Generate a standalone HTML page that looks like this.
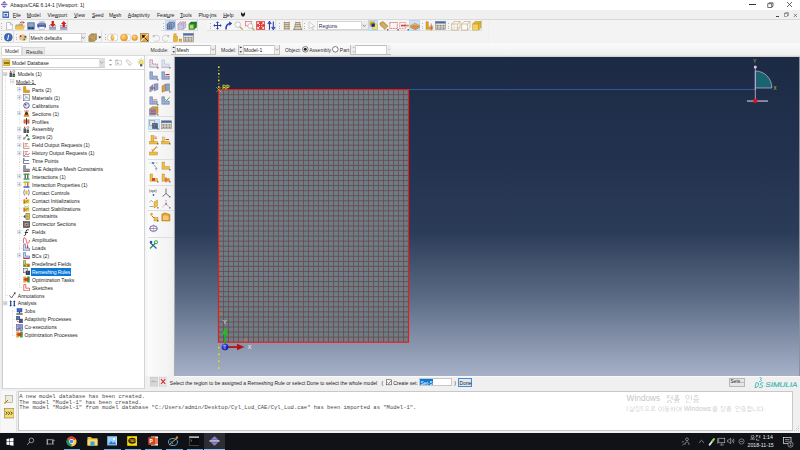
<!DOCTYPE html><html><head><meta charset="utf-8"><style>
html,body{margin:0;padding:0;}body{width:800px;height:450px;overflow:hidden;position:relative;background:#f0f0f0;font-family:"Liberation Sans",sans-serif;}
div,svg{box-sizing:border-box;}
</style></head><body>
<div style="position:absolute;left:0px;top:0px;width:800px;height:9.6px;background:#ffffff"></div>
<svg style="position:absolute;left:0px;top:0px;" width="9" height="9" viewBox="0 0 9 9"><path d="M4.2 1 L6.8 3.4 H1.6 Z" fill="#7a6ac0"/><rect x="1" y="4.1" width="6.4" height="0.9" fill="#6a5ab0"/><path d="M4.2 8.1 L6.8 5.7 H1.6 Z" fill="#7a6ac0"/></svg>
<div style="position:absolute;left:10.3px;top:1.6px;font-size:5.05px;line-height:6.06px;color:#222;white-space:nowrap;">Abaqus/CAE 6.14-1 [Viewport: 1]</div>
<div style="position:absolute;left:748.5px;top:4.2px;width:7px;height:0.7px;background:#333"></div>
<svg style="position:absolute;left:767px;top:1.5px;" width="7" height="6" viewBox="0 0 7 6"><rect x="0.8" y="1.8" width="4" height="3.6" fill="none" stroke="#333" stroke-width="0.7"/><path d="M2 1.8 V0.8 H6 V4.4 H4.8" fill="none" stroke="#333" stroke-width="0.7"/></svg>
<svg style="position:absolute;left:786px;top:1px;" width="7" height="7" viewBox="0 0 7 7"><path d="M1 1 L6 6 M6 1 L1 6" stroke="#333" stroke-width="0.75"/></svg>
<div style="position:absolute;left:0px;top:9.6px;width:800px;height:9.8px;background:#f0f0f0"></div>
<div style="position:absolute;left:0px;top:19.3px;width:800px;height:0.7px;background:#d9d9d9"></div>
<svg style="position:absolute;left:2px;top:10.5px;" width="8" height="8" viewBox="0 0 8 8"><rect x="0.5" y="0.5" width="6.5" height="6.5" fill="#3a6ab8"/><rect x="1.5" y="2" width="4.5" height="3.5" fill="#dfe8f5"/><rect x="2.5" y="3" width="2.5" height="1.5" fill="#3a5aa0"/></svg>
<div style="position:absolute;left:12.7px;top:11.6px;font-size:5.05px;line-height:6.06px;color:#222;white-space:nowrap;">File</div>
<div style="position:absolute;left:12.7px;top:17.0px;width:3.0844453125px;height:0.55px;background:#666"></div>
<div style="position:absolute;left:26.8px;top:11.6px;font-size:5.05px;line-height:6.06px;color:#222;white-space:nowrap;">Model</div>
<div style="position:absolute;left:26.8px;top:17.0px;width:4.2064921875px;height:0.55px;background:#666"></div>
<div style="position:absolute;left:47.6px;top:11.6px;font-size:5.05px;line-height:6.06px;color:#222;white-space:nowrap;">Viewport</div>
<div style="position:absolute;left:54.807296875px;top:17.0px;width:3.6470468749999996px;height:0.55px;background:#666"></div>
<div style="position:absolute;left:74px;top:11.6px;font-size:5.05px;line-height:6.06px;color:#222;white-space:nowrap;">View</div>
<div style="position:absolute;left:74.0px;top:17.0px;width:3.3685078125px;height:0.55px;background:#666"></div>
<div style="position:absolute;left:91.9px;top:11.6px;font-size:5.05px;line-height:6.06px;color:#222;white-space:nowrap;">Seed</div>
<div style="position:absolute;left:91.9px;top:17.0px;width:3.3685078125px;height:0.55px;background:#666"></div>
<div style="position:absolute;left:109px;top:11.6px;font-size:5.05px;line-height:6.06px;color:#222;white-space:nowrap;">Mesh</div>
<div style="position:absolute;left:113.2064921875px;top:17.0px;width:2.8082734375px;height:0.55px;background:#666"></div>
<div style="position:absolute;left:127.8px;top:11.6px;font-size:5.05px;line-height:6.06px;color:#222;white-space:nowrap;">Adaptivity</div>
<div style="position:absolute;left:127.8px;top:17.0px;width:3.3685078125px;height:0.55px;background:#666"></div>
<div style="position:absolute;left:157px;top:11.6px;font-size:5.05px;line-height:6.06px;color:#222;white-space:nowrap;">Feature</div>
<div style="position:absolute;left:167.1039453125px;top:17.0px;width:2.8082734375px;height:0.55px;background:#666"></div>
<div style="position:absolute;left:180px;top:11.6px;font-size:5.05px;line-height:6.06px;color:#222;white-space:nowrap;">Tools</div>
<div style="position:absolute;left:180.0px;top:17.0px;width:3.0844453125px;height:0.55px;background:#666"></div>
<div style="position:absolute;left:198.4px;top:11.6px;font-size:5.05px;line-height:6.06px;color:#222;white-space:nowrap;">Plug-ins</div>
<div style="position:absolute;left:210.18859375px;top:17.0px;width:1.122046875px;height:0.55px;background:#666"></div>
<div style="position:absolute;left:223.2px;top:11.6px;font-size:5.05px;line-height:6.06px;color:#222;white-space:nowrap;">Help</div>
<div style="position:absolute;left:223.2px;top:17.0px;width:3.6470468749999996px;height:0.55px;background:#666"></div>
<svg style="position:absolute;left:240px;top:11px;" width="6" height="7" viewBox="0 0 6 7"><path d="M1 1 L3 3 L5 1 L5 4 L3 6 L1 4 Z" fill="#222"/></svg>
<div style="position:absolute;left:776px;top:15.6px;width:3px;height:0.7px;background:#444"></div>
<svg style="position:absolute;left:784px;top:12.2px;" width="5" height="5" viewBox="0 0 5 5"><rect x="0.5" y="1.5" width="3" height="3" fill="none" stroke="#555" stroke-width="0.5"/><path d="M1.5 1.5 V0.5 H4.5 V3.5 H3.5" fill="none" stroke="#555" stroke-width="0.5"/></svg>
<svg style="position:absolute;left:792.5px;top:12.5px;" width="5" height="5" viewBox="0 0 5 5"><path d="M0.8 0.8 L4 4 M4 0.8 L0.8 4" stroke="#444" stroke-width="0.6"/></svg>
<div style="position:absolute;left:0px;top:20px;width:800px;height:23px;background:#f3f3f3"></div>
<div style="position:absolute;left:0px;top:19.8px;width:68.3px;height:11.399999999999999px;background:#f5f5f5;border-right:0.7px solid #dedede;border-bottom:0.7px solid #dedede"></div>
<div style="position:absolute;left:161px;top:19.8px;width:37px;height:11.399999999999999px;background:#f5f5f5;border-right:0.7px solid #dedede;border-bottom:0.7px solid #dedede"></div>
<div style="position:absolute;left:207px;top:19.8px;width:69px;height:11.399999999999999px;background:#f5f5f5;border-right:0.7px solid #dedede;border-bottom:0.7px solid #dedede"></div>
<div style="position:absolute;left:277px;top:19.8px;width:25.5px;height:11.399999999999999px;background:#f5f5f5;border-right:0.7px solid #dedede;border-bottom:0.7px solid #dedede"></div>
<div style="position:absolute;left:303px;top:19.8px;width:178.60000000000002px;height:11.399999999999999px;background:#f5f5f5;border-right:0.7px solid #dedede;border-bottom:0.7px solid #dedede"></div>
<div style="position:absolute;left:488px;top:19.8px;width:0.6px;height:23px;background:#efefef"></div>
<div style="position:absolute;left:0px;top:31.3px;width:14.3px;height:11.900000000000002px;background:#f5f5f5;border-right:0.7px solid #dedede;border-bottom:0.7px solid #dedede"></div>
<div style="position:absolute;left:15px;top:31.3px;width:87px;height:11.900000000000002px;background:#f5f5f5;border-right:0.7px solid #dedede;border-bottom:0.7px solid #dedede"></div>
<div style="position:absolute;left:103px;top:31.3px;width:91px;height:11.900000000000002px;background:#f5f5f5;border-right:0.7px solid #dedede;border-bottom:0.7px solid #dedede"></div>
<div style="position:absolute;left:1.2px;top:23.2px;width:0.8px;height:0.8px;background:#b4b4b4"></div>
<div style="position:absolute;left:1.2px;top:25.599999999999998px;width:0.8px;height:0.8px;background:#b4b4b4"></div>
<div style="position:absolute;left:1.2px;top:28.0px;width:0.8px;height:0.8px;background:#b4b4b4"></div>
<div style="position:absolute;left:162.6px;top:23.2px;width:0.8px;height:0.8px;background:#b4b4b4"></div>
<div style="position:absolute;left:162.6px;top:25.599999999999998px;width:0.8px;height:0.8px;background:#b4b4b4"></div>
<div style="position:absolute;left:162.6px;top:28.0px;width:0.8px;height:0.8px;background:#b4b4b4"></div>
<div style="position:absolute;left:209.5px;top:23.2px;width:0.8px;height:0.8px;background:#b4b4b4"></div>
<div style="position:absolute;left:209.5px;top:25.599999999999998px;width:0.8px;height:0.8px;background:#b4b4b4"></div>
<div style="position:absolute;left:209.5px;top:28.0px;width:0.8px;height:0.8px;background:#b4b4b4"></div>
<div style="position:absolute;left:279px;top:23.2px;width:0.8px;height:0.8px;background:#b4b4b4"></div>
<div style="position:absolute;left:279px;top:25.599999999999998px;width:0.8px;height:0.8px;background:#b4b4b4"></div>
<div style="position:absolute;left:279px;top:28.0px;width:0.8px;height:0.8px;background:#b4b4b4"></div>
<div style="position:absolute;left:304.2px;top:23.2px;width:0.8px;height:0.8px;background:#b4b4b4"></div>
<div style="position:absolute;left:304.2px;top:25.599999999999998px;width:0.8px;height:0.8px;background:#b4b4b4"></div>
<div style="position:absolute;left:304.2px;top:28.0px;width:0.8px;height:0.8px;background:#b4b4b4"></div>
<div style="position:absolute;left:1.2px;top:34.2px;width:0.8px;height:0.8px;background:#b4b4b4"></div>
<div style="position:absolute;left:1.2px;top:36.6px;width:0.8px;height:0.8px;background:#b4b4b4"></div>
<div style="position:absolute;left:1.2px;top:39.0px;width:0.8px;height:0.8px;background:#b4b4b4"></div>
<div style="position:absolute;left:16.2px;top:34.2px;width:0.8px;height:0.8px;background:#b4b4b4"></div>
<div style="position:absolute;left:16.2px;top:36.6px;width:0.8px;height:0.8px;background:#b4b4b4"></div>
<div style="position:absolute;left:16.2px;top:39.0px;width:0.8px;height:0.8px;background:#b4b4b4"></div>
<div style="position:absolute;left:104.5px;top:34.2px;width:0.8px;height:0.8px;background:#b4b4b4"></div>
<div style="position:absolute;left:104.5px;top:36.6px;width:0.8px;height:0.8px;background:#b4b4b4"></div>
<div style="position:absolute;left:104.5px;top:39.0px;width:0.8px;height:0.8px;background:#b4b4b4"></div>
<div style="position:absolute;left:422.2px;top:23.2px;width:0.8px;height:0.8px;background:#b4b4b4"></div>
<div style="position:absolute;left:422.2px;top:25.599999999999998px;width:0.8px;height:0.8px;background:#b4b4b4"></div>
<div style="position:absolute;left:422.2px;top:28.0px;width:0.8px;height:0.8px;background:#b4b4b4"></div>
<div style="position:absolute;left:448.2px;top:23.2px;width:0.8px;height:0.8px;background:#b4b4b4"></div>
<div style="position:absolute;left:448.2px;top:25.599999999999998px;width:0.8px;height:0.8px;background:#b4b4b4"></div>
<div style="position:absolute;left:448.2px;top:28.0px;width:0.8px;height:0.8px;background:#b4b4b4"></div>
<svg style="position:absolute;left:5.5px;top:21.5px;" width="7.5" height="8.5" viewBox="0 0 7.5 8.5"><path d="M0.5 0.5 H4.5 L6.8 2.8 V7.8 H0.5 Z" fill="#fbfbfd" stroke="#9a9aa8" stroke-width="0.6"/><path d="M4.5 0.5 V2.8 H6.8" fill="#e0e0e8" stroke="#9a9aa8" stroke-width="0.5"/></svg>
<svg style="position:absolute;left:14.8px;top:21px;" width="10.5" height="9" viewBox="0 0 10.5 9"><path d="M0.8 3.5 H3.5 L4.3 2.6 H8 V8 H0.8 Z" fill="#a8a8a8"/><path d="M0.3 4.8 H9.5 L8.3 8.3 H0.6 Z" fill="#f2c542" stroke="#c89a20" stroke-width="0.4"/><path d="M5 1.5 Q7 0.3 8.8 1.6" stroke="#e02020" stroke-width="0.9" fill="none"/><path d="M9.8 1.2 L8 0.5 L8.5 2.8 Z" fill="#e02020"/></svg>
<svg style="position:absolute;left:26.5px;top:21.8px;" width="8" height="8" viewBox="0 0 8 8"><rect x="0.4" y="0.4" width="7.2" height="7.2" fill="#3a64a8"/><rect x="1.3" y="1.2" width="5.4" height="3.6" fill="#9aa4b4"/><rect x="1.6" y="5.6" width="1.6" height="1.2" fill="#1c2c50"/><rect x="4.6" y="5.6" width="1.6" height="1.2" fill="#1c2c50"/></svg>
<svg style="position:absolute;left:36.5px;top:21.3px;" width="9.8" height="8.6" viewBox="0 0 9.8 8.6"><rect x="2.2" y="0.3" width="5.4" height="2.6" fill="#b8b8c0"/><rect x="0.3" y="2.6" width="9.2" height="3.8" rx="1" fill="#3a4ea8"/><rect x="1.2" y="3.3" width="7.4" height="0.9" fill="#8a9ad8"/><rect x="2" y="5.8" width="5.8" height="2.6" fill="#f4f4f8" stroke="#8a8aa0" stroke-width="0.4"/><circle cx="8.2" cy="4.6" r="0.45" fill="#30c030"/></svg>
<svg style="position:absolute;left:48.5px;top:21px;" width="7.5" height="9" viewBox="0 0 7.5 9"><rect x="0.5" y="4.3" width="6.5" height="4.4" fill="#d4dcea" stroke="#6a7aa0" stroke-width="0.4"/><rect x="0.8" y="6" width="6" height="0.7" fill="#6a7aa0"/><rect x="0.8" y="7.5" width="6" height="0.6" fill="#6a7aa0"/><path d="M2.6 0 H4.9 V3.1 H6.5 L3.75 5.9 L1 3.1 H2.6 Z" fill="#e01818"/></svg>
<svg style="position:absolute;left:59.5px;top:21px;" width="7.5" height="9" viewBox="0 0 7.5 9"><rect x="0.5" y="4.3" width="6.5" height="4.4" fill="#d4dcea" stroke="#6a7aa0" stroke-width="0.4"/><rect x="0.8" y="6" width="6" height="0.7" fill="#6a7aa0"/><rect x="0.8" y="7.5" width="6" height="0.6" fill="#6a7aa0"/><path d="M2.6 6 H4.9 V2.9 H6.5 L3.75 0.1 L1 2.9 H2.6 Z" fill="#e01818"/></svg>
<div style="position:absolute;left:165px;top:20.3px;width:11px;height:10.6px;background:#cce4f7;border:0.5px solid #b8daf4"></div>
<svg style="position:absolute;left:166px;top:21px;" width="10" height="9" viewBox="0 0 10 9"><path d="M0.8 3 L3.3 0.8 H8.8 V6.3 L6.3 8.5 H0.8 Z" fill="#4a5a88"/><path d="M0.8 3 H6.3 V8.5 M6.3 3 L8.8 0.8" stroke="#dfe6f4" stroke-width="0.4" fill="none"/><path d="M2.6 3 V8.5 M4.45 3 V8.5 M0.8 4.85 H6.3 M0.8 6.7 H6.3 M1.6 2.3 H7.1 M2.45 1.55 H7.95 M7.1 2.3 V7.8 M7.95 1.55 V7.05 M6.3 4.85 L8.8 2.65 M6.3 6.7 L8.8 4.5" stroke="#c8d2ec" stroke-width="0.35" fill="none"/></svg>
<svg style="position:absolute;left:177px;top:21px;" width="10" height="9" viewBox="0 0 10 9"><path d="M0.8 3 L3.3 0.8 H8.8 V6.3 L6.3 8.5 H0.8 Z" fill="#b8c8ee"/><path d="M0.8 3 L3.3 0.8 H8.8 V6.3 L6.3 8.5 H0.8 Z M0.8 3 H6.3 V8.5 M6.3 3 L8.8 0.8" fill="none" stroke="#e83030" stroke-width="0.6" stroke-dasharray="0.7 0.9"/></svg>
<svg style="position:absolute;left:188px;top:21px;" width="10" height="9" viewBox="0 0 10 9"><path d="M0.8 3 L3.3 0.8 H8.8 V6.3 L6.3 8.5 H0.8 Z" fill="#207a20"/><path d="M0.8 3 H6.3 V8.5 H0.8 Z" fill="#40a840"/><rect x="2" y="4.2" width="3.2" height="3.2" fill="#d8d070"/><path d="M6.3 3 L8.8 0.8 M0.8 3 L3.3 0.8" stroke="#185818" stroke-width="0.4"/></svg>
<svg style="position:absolute;left:212.8px;top:21px;" width="9" height="9" viewBox="0 0 9 9"><path d="M4.5 0.3 L6 2 H5 V4 H7 V3 L8.7 4.5 L7 6 V5 H5 V7 H6 L4.5 8.7 L3 7 H4 V5 H2 V6 L0.3 4.5 L2 3 V4 H4 V2 H3 Z" fill="#2a3ea8"/></svg>
<svg style="position:absolute;left:223.5px;top:21px;" width="8.5" height="9" viewBox="0 0 8.5 9"><path d="M2 8.5 Q1.8 3 6 2.4" stroke="#2a3ea8" stroke-width="1.5" fill="none"/><path d="M5.2 0.2 L8.3 2.5 L5.2 4.8 Z" fill="#2a3ea8"/></svg>
<svg style="position:absolute;left:233.5px;top:21px;" width="9.5" height="9" viewBox="0 0 9.5 9"><circle cx="3.8" cy="3.6" r="2.8" fill="#f8f8fa" stroke="#a8a8b0" stroke-width="0.6"/><path d="M5.8 5.7 L8.8 8.6" stroke="#c8a050" stroke-width="1.3"/></svg>
<svg style="position:absolute;left:244.5px;top:21px;" width="10" height="9.5" viewBox="0 0 10 9.5"><rect x="0.4" y="0.4" width="6" height="4.5" fill="none" stroke="#e05050" stroke-width="0.6"/><circle cx="5.3" cy="5" r="2.5" fill="#f8f8fa" stroke="#a8a8b0" stroke-width="0.6"/><path d="M7 6.8 L9.5 9.2" stroke="#c8a050" stroke-width="1.2"/></svg>
<svg style="position:absolute;left:255.8px;top:21px;" width="9.5" height="9" viewBox="0 0 9.5 9"><rect x="0.2" y="0.2" width="9" height="8.6" fill="#e23a3a"/><path d="M2.2 2.2 L3.9 3.9 M7.2 2.2 L5.5 3.9 M2.2 6.8 L3.9 5.1 M7.2 6.8 L5.5 5.1" stroke="#fff" stroke-width="1"/><path d="M1.2 1.2 H3.6 L1.2 3.6 Z M8.2 1.2 H5.8 L8.2 3.6 Z M1.2 7.8 H3.6 L1.2 5.4 Z M8.2 7.8 H5.8 L8.2 5.4 Z" fill="#fff"/></svg>
<svg style="position:absolute;left:266.8px;top:21px;" width="9" height="9" viewBox="0 0 9 9"><path d="M2.5 8.8 V2 M0.8 3 L2.5 0.5 L4.2 3" stroke="#2a3ea8" stroke-width="1.1" fill="none"/><path d="M6.3 0.5 V7 M4.6 6 L6.3 8.5 L8 6" stroke="#2a3ea8" stroke-width="1.1" fill="none"/></svg>
<svg style="position:absolute;left:282.5px;top:21px;" width="8" height="9" viewBox="0 0 8 9"><path d="M1.3 0.5 V8.8 M6.3 0.5 V8.8" stroke="#c8b080" stroke-width="1.1"/><path d="M1.3 1.8 H6.3 M1.3 3.8 H6.3 M1.3 5.8 H6.3 M1.3 7.8 H6.3" stroke="#6a5030" stroke-width="0.8"/></svg>
<svg style="position:absolute;left:292.5px;top:21px;" width="9.5" height="9" viewBox="0 0 9.5 9"><path d="M3 0.5 L1 8.8 M6.5 0.5 L8.5 8.8" stroke="#c8b080" stroke-width="1.1"/><path d="M2.7 1.8 H6.8 M2.2 3.8 H7.3 M1.7 5.8 H7.8 M0.3 8.2 H9.2" stroke="#6a5030" stroke-width="0.8"/></svg>
<svg style="position:absolute;left:307.8px;top:21px;" width="8" height="9" viewBox="0 0 8 9"><path d="M1 0.6 L6.8 5.6 L4 5.8 L5.6 8.6 L4.6 9 L3 6.2 L1 8 Z" fill="#fafafa" stroke="#a8a8a8" stroke-width="0.5"/></svg>
<div style="position:absolute;left:317.3px;top:20.5px;width:50.8px;height:9.4px;background:#fff;border:0.6px solid #d4d4d4"></div>
<div style="position:absolute;left:360.8px;top:20.9px;width:6.9px;height:8.6px;background:#ececec;border-left:0.5px solid #d8d8d8"></div>
<svg style="position:absolute;left:362.1px;top:23.6px;" width="5" height="4" viewBox="0 0 5 4"><path d="M0.8 0.8 L2.3 2.5 L3.8 0.8" stroke="#555" stroke-width="0.6" fill="none"/></svg>
<div style="position:absolute;left:318.8px;top:22.5px;font-size:5.05px;line-height:6.06px;color:#2a2a58;white-space:nowrap;">Regions</div>
<div style="position:absolute;left:367.6px;top:20.3px;width:10.6px;height:10.6px;background:#cce4f7;border:0.5px solid #b8daf4"></div>
<svg style="position:absolute;left:368.5px;top:21.3px;" width="9" height="9" viewBox="0 0 9 9"><rect x="0.5" y="0.5" width="5.5" height="5" fill="#e0a820"/><rect x="3.5" y="3" width="5" height="5.3" fill="#f0e070" stroke="#b09020" stroke-width="0.3"/><rect x="2.5" y="2.5" width="3.3" height="3.3" fill="#1a2a8a"/></svg>
<svg style="position:absolute;left:378.5px;top:21px;" width="10" height="9.5" viewBox="0 0 10 9.5"><path d="M1 2 L4 0.5 L9 5 L6 8.5 L1 4 Z" fill="#c8a050" stroke="#806030" stroke-width="0.4"/><path d="M2 3 L7 7.5 M3 2 L8 6.3" stroke="#f0d090" stroke-width="0.5"/><rect x="8.2" y="8.2" width="1.2" height="1.2" fill="#222"/></svg>
<svg style="position:absolute;left:388.8px;top:21px;" width="10" height="9.5" viewBox="0 0 10 9.5"><rect x="0.8" y="1.5" width="7.5" height="6" fill="none" stroke="#e04040" stroke-width="0.7" stroke-dasharray="1.2 0.5"/><rect x="8.5" y="8.2" width="1.2" height="1.2" fill="#222"/></svg>
<svg style="position:absolute;left:399px;top:21px;" width="10.5" height="9.5" viewBox="0 0 10.5 9.5"><rect x="0.7" y="1.5" width="6" height="6.2" fill="none" stroke="#e04040" stroke-width="0.6" stroke-dasharray="1 0.5"/><path d="M2 4.6 H8 M3 3.4 V5.8 M5.2 3.4 V5.8" stroke="#d02020" stroke-width="0.8"/><circle cx="8.8" cy="4.6" r="1.2" fill="#e0a030"/><rect x="8.6" y="8.2" width="1.2" height="1.2" fill="#222"/></svg>
<div style="position:absolute;left:408.8px;top:20.3px;width:11.6px;height:10.6px;background:#cce4f7;border:0.5px solid #b8daf4"></div>
<svg style="position:absolute;left:409.5px;top:21.5px;" width="10" height="8.5" viewBox="0 0 10 8.5"><path d="M0.5 3.5 L5 1 L9.5 3.5 L5 6 Z" fill="#f0b060" stroke="#b07030" stroke-width="0.35"/><path d="M0.5 3.5 V5.5 L5 8 L9.5 5.5 V3.5" fill="#e09040" stroke="#b07030" stroke-width="0.35"/><path d="M2.5 4.5 Q5 3 7.5 4.5" stroke="#6a8ad0" stroke-width="0.6" fill="none"/></svg>
<svg style="position:absolute;left:425px;top:21px;" width="9.5" height="9.5" viewBox="0 0 9.5 9.5"><path d="M1 0.8 H3.3 V6 H7.8 V8.3 H1 Z" fill="#e0a828" stroke="#a07010" stroke-width="0.4"/><path d="M6.3 2.5 V9.5" stroke="#e03030" stroke-width="0.6"/><path d="M4.5 5 H8.5" stroke="#555" stroke-width="0.4"/></svg>
<svg style="position:absolute;left:435.2px;top:21.2px;" width="11" height="9" viewBox="0 0 11 9"><rect x="0.5" y="0.5" width="10" height="8" fill="#e8e4d8" stroke="#707070" stroke-width="0.5"/><rect x="0.5" y="0.5" width="10" height="2" fill="#4a6ab0"/><rect x="1.5" y="4" width="2" height="1.5" fill="#8a8070"/><rect x="4.5" y="4" width="2" height="1.5" fill="#8a8070"/><rect x="7.5" y="4" width="2" height="1.5" fill="#8a8070"/><rect x="1.5" y="6.3" width="2" height="1.5" fill="#8a8070"/><rect x="4.5" y="6.3" width="2" height="1.5" fill="#8a8070"/><rect x="7.5" y="6.3" width="2" height="1.5" fill="#8a8070"/></svg>
<svg style="position:absolute;left:450.8px;top:21.2px;" width="10" height="9.5" viewBox="0 0 10 9.5"><path d="M0.6 3 L3 0.6 H9 V6.6 L6.6 9 H0.6 Z" fill="#fafafa" stroke="#b09050" stroke-width="0.5"/><path d="M0.6 3 H6.6 V9 M6.6 3 L9 0.6" stroke="#b09050" stroke-width="0.5" fill="none"/><path d="M3 0.6 V6.6 H9 M0.6 9 L3 6.6" stroke="#c8b080" stroke-width="0.4" fill="none"/></svg>
<svg style="position:absolute;left:461.2px;top:21.2px;" width="10" height="9.5" viewBox="0 0 10 9.5"><path d="M0.6 3 L3 0.6 H9 V6.6 L6.6 9 H0.6 Z" fill="#fafafa" stroke="#b09050" stroke-width="0.5"/><path d="M0.6 3 H6.6 V9 M6.6 3 L9 0.6" stroke="#b09050" stroke-width="0.5" fill="none"/></svg>
<svg style="position:absolute;left:471.6px;top:21.2px;" width="10" height="9.5" viewBox="0 0 10 9.5"><path d="M0.6 3 L3 0.6 H9 V6.6 L6.6 9 H0.6 Z" fill="#e8b830" stroke="#a08020" stroke-width="0.5"/><path d="M0.6 3 H6.6 V9 H0.6 Z" fill="#f4d060"/><path d="M0.6 3 H6.6 V9 M6.6 3 L9 0.6" stroke="#a08020" stroke-width="0.5" fill="none"/></svg>
<svg style="position:absolute;left:4.3px;top:33.2px;" width="8.6" height="8.6" viewBox="0 0 8.6 8.6"><circle cx="4.3" cy="4.3" r="4" fill="#3a6ab8" stroke="#2a4a90" stroke-width="0.4"/><path d="M4.8 1.8 L3.6 7" stroke="#fff" stroke-width="1"/></svg>
<svg style="position:absolute;left:18.3px;top:34px;" width="9.5" height="7.5" viewBox="0 0 9.5 7.5"><path d="M1 3.5 Q1 0.3 5 0.5 Q9 0.8 9 3.5 Q9 6.8 5 7 Q3.5 7 3.5 5.5 Q2 7 1 5 Z" fill="#e8c090"/><circle cx="2.6" cy="2.2" r="0.9" fill="#e02020"/><circle cx="5" cy="1.6" r="0.9" fill="#e8d020"/><circle cx="7.3" cy="2.8" r="0.9" fill="#203080"/><circle cx="6.3" cy="5.3" r="0.9" fill="#20a020"/></svg>
<div style="position:absolute;left:29px;top:33.2px;width:57.2px;height:8.8px;background:#fff;border:0.6px solid #cfcfcf"></div>
<div style="position:absolute;left:80.5px;top:33.6px;width:5.4px;height:8px;background:#ececec;border-left:0.5px solid #d0d0d0"></div>
<svg style="position:absolute;left:81px;top:36px;" width="5" height="4" viewBox="0 0 5 4"><path d="M0.8 0.8 L2.3 2.5 L3.8 0.8" stroke="#666" stroke-width="0.6" fill="none"/></svg>
<div style="position:absolute;left:30.6px;top:35.3px;font-size:5.05px;line-height:6.06px;color:#222;white-space:nowrap;">Mesh defaults</div>
<svg style="position:absolute;left:87.5px;top:32.8px;" width="9" height="9" viewBox="0 0 9 9"><path d="M0.8 3 L3 0.8 H8.5 V6.3 L6.3 8.5 H0.8 Z" fill="#b09050" stroke="#806020" stroke-width="0.4"/><path d="M0.8 3 H6.3 V8.5 M6.3 3 L8.5 0.8 M2 4.5 H5 V7.5" stroke="#e0c890" stroke-width="0.4" fill="none"/></svg>
<svg style="position:absolute;left:98px;top:36px;" width="4" height="3" viewBox="0 0 4 3"><path d="M0.3 0.5 H3.2 L1.75 2.5 Z" fill="#222"/></svg>
<svg style="position:absolute;left:106.5px;top:33px;" width="11.5" height="9" viewBox="0 0 11.5 9"><defs><radialGradient id="og" cx="0.4" cy="0.35" r="0.7"><stop offset="0" stop-color="#ffd890"/><stop offset="1" stop-color="#e89018"/></radialGradient><clipPath id="c1"><circle cx="4" cy="4.5" r="3.6"/></clipPath></defs><circle cx="4" cy="4.5" r="3.6" fill="#fff" stroke="#a0a0a0" stroke-width="0.4"/><circle cx="7.3" cy="4.5" r="3.6" fill="#fff" stroke="#a0a0a0" stroke-width="0.4"/><circle cx="7.3" cy="4.5" r="3.6" fill="url(#og)" clip-path="url(#c1)"/></svg>
<svg style="position:absolute;left:119.5px;top:33px;" width="11.5" height="9" viewBox="0 0 11.5 9"><circle cx="7.3" cy="4.5" r="3.6" fill="#fff" stroke="#a0a0a0" stroke-width="0.4"/><circle cx="4" cy="4.5" r="3.6" fill="url(#og)" stroke="#c88020" stroke-width="0.3"/></svg>
<svg style="position:absolute;left:131.3px;top:33.8px;" width="7.5" height="7.5" viewBox="0 0 7.5 7.5"><circle cx="3.7" cy="3.7" r="2.9" fill="url(#og)" stroke="#c88020" stroke-width="0.3"/></svg>
<svg style="position:absolute;left:140px;top:33px;" width="9" height="9" viewBox="0 0 9 9"><rect x="0.3" y="0.3" width="8.4" height="8.4" fill="#f0a830" stroke="#666" stroke-width="0.4"/><path d="M8.3 0.7 L0.7 8.3" stroke="#fff" stroke-width="0.9"/><path d="M8.3 8.3 L4.5 4.5" stroke="#111" stroke-width="0.8"/><path d="M2 2 L5.6 2.6 L2.6 5.6 Z" fill="#111"/></svg>
<svg style="position:absolute;left:151.5px;top:33.5px;" width="8" height="8" viewBox="0 0 8 8"><path d="M2 2.5 A3.2 3.2 0 1 1 2.2 6.5" stroke="#b8b8b8" stroke-width="0.6" fill="none"/><path d="M0.5 1 L3.3 1.6 L1.3 3.8 Z" fill="#b8b8b8"/></svg>
<svg style="position:absolute;left:162.3px;top:33.5px;" width="8" height="8" viewBox="0 0 8 8"><path d="M6 2.5 A3.2 3.2 0 1 0 5.8 6.5" stroke="#b8b8b8" stroke-width="0.6" fill="none"/><path d="M7.5 1 L4.7 1.6 L6.7 3.8 Z" fill="#b8b8b8"/></svg>
<svg style="position:absolute;left:172.8px;top:33px;" width="9.5" height="9.5" viewBox="0 0 9.5 9.5"><rect x="0.5" y="0.5" width="3" height="2" fill="#e0a020"/><rect x="0.5" y="3" width="4" height="5.5" fill="#f0b030" stroke="#a07010" stroke-width="0.3"/><rect x="6" y="6" width="3" height="2.5" fill="#f0b030" stroke="#a07010" stroke-width="0.3"/></svg>
<svg style="position:absolute;left:183px;top:33px;" width="11" height="9" viewBox="0 0 11 9"><rect x="0.5" y="0.5" width="10" height="8" fill="#e8e4d8" stroke="#707070" stroke-width="0.5"/><rect x="0.5" y="0.5" width="10" height="2" fill="#4a6ab0"/><rect x="1.5" y="4" width="2" height="1.5" fill="#8a8070"/><rect x="4.5" y="4" width="2" height="1.5" fill="#8a8070"/><rect x="7.5" y="4" width="2" height="1.5" fill="#8a8070"/><rect x="1.5" y="6.3" width="2" height="1.5" fill="#8a8070"/><rect x="4.5" y="6.3" width="2" height="1.5" fill="#8a8070"/><rect x="7.5" y="6.3" width="2" height="1.5" fill="#8a8070"/></svg>
<div style="position:absolute;left:0px;top:43px;width:800px;height:14px;background:linear-gradient(#fbfbfb,#f0f0f0 85%,#c8c8c8)"></div>
<div style="position:absolute;left:150.5px;top:46.9px;font-size:5.05px;line-height:6.06px;color:#333;white-space:nowrap;">Module:</div>
<div style="position:absolute;left:170.5px;top:44.8px;width:45.0px;height:9.900000000000006px;background:#fff;border:0.6px solid #bdbdbd"></div>
<div style="position:absolute;left:171.0px;top:45.3px;width:5px;height:8.900000000000006px;background:#ededed;border-right:0.5px solid #d0d0d0"></div>
<svg style="position:absolute;left:171.8px;top:46.099999999999994px;" width="3.5" height="7.300000000000006" viewBox="0 0 3.5 7.300000000000006"><path d="M0.4 2 L1.75 0.5 L3.1 2 Z M0.4 5.3 L1.75 6.8 L3.1 5.3 Z" fill="#333"/></svg>
<div style="position:absolute;left:210.3px;top:45.3px;width:4.7px;height:8.900000000000006px;background:#ededed;border-left:0.5px solid #d0d0d0"></div>
<svg style="position:absolute;left:210.7px;top:48.199999999999996px;" width="4" height="3" viewBox="0 0 4 3"><path d="M0.6 0.6 L2 2.2 L3.4 0.6" stroke="#666" stroke-width="0.55" fill="none"/></svg>
<div style="position:absolute;left:176.5px;top:47.099999999999994px;font-size:5.05px;line-height:6.06px;color:#222;white-space:nowrap;">Mesh</div>
<div style="position:absolute;left:221px;top:46.9px;font-size:5.05px;line-height:6.06px;color:#333;white-space:nowrap;">Model:</div>
<div style="position:absolute;left:238px;top:44.8px;width:41.5px;height:9.900000000000006px;background:#fff;border:0.6px solid #bdbdbd"></div>
<div style="position:absolute;left:238.5px;top:45.3px;width:5px;height:8.900000000000006px;background:#ededed;border-right:0.5px solid #d0d0d0"></div>
<svg style="position:absolute;left:239.3px;top:46.099999999999994px;" width="3.5" height="7.300000000000006" viewBox="0 0 3.5 7.300000000000006"><path d="M0.4 2 L1.75 0.5 L3.1 2 Z M0.4 5.3 L1.75 6.8 L3.1 5.3 Z" fill="#333"/></svg>
<div style="position:absolute;left:274.3px;top:45.3px;width:4.7px;height:8.900000000000006px;background:#ededed;border-left:0.5px solid #d0d0d0"></div>
<svg style="position:absolute;left:274.7px;top:48.199999999999996px;" width="4" height="3" viewBox="0 0 4 3"><path d="M0.6 0.6 L2 2.2 L3.4 0.6" stroke="#666" stroke-width="0.55" fill="none"/></svg>
<div style="position:absolute;left:244px;top:47.099999999999994px;font-size:5.05px;line-height:6.06px;color:#222;white-space:nowrap;">Model-1</div>
<div style="position:absolute;left:285px;top:46.9px;font-size:5.05px;line-height:6.06px;color:#333;white-space:nowrap;">Object:</div>
<svg style="position:absolute;left:301.6px;top:46.3px;" width="7" height="7" viewBox="0 0 7 7"><circle cx="3.3" cy="3.3" r="2.8" fill="#fff" stroke="#333" stroke-width="0.6"/><circle cx="3.3" cy="3.3" r="1.5" fill="#222"/></svg>
<div style="position:absolute;left:309.2px;top:46.9px;font-size:5.05px;line-height:6.06px;color:#333;white-space:nowrap;">Assembly</div>
<svg style="position:absolute;left:331.5px;top:46.3px;" width="7" height="7" viewBox="0 0 7 7"><circle cx="3.3" cy="3.3" r="2.8" fill="#fff" stroke="#333" stroke-width="0.6"/></svg>
<div style="position:absolute;left:339.8px;top:46.9px;font-size:5.05px;line-height:6.06px;color:#333;white-space:nowrap;">Part:</div>
<div style="position:absolute;left:350.3px;top:44.8px;width:41.19999999999999px;height:9.900000000000006px;background:#fff;border:0.6px solid #bdbdbd"></div>
<div style="position:absolute;left:350.8px;top:45.3px;width:5px;height:8.900000000000006px;background:#ededed;border-right:0.5px solid #d0d0d0"></div>
<svg style="position:absolute;left:351.6px;top:46.099999999999994px;" width="3.5" height="7.300000000000006" viewBox="0 0 3.5 7.300000000000006"><path d="M0.4 2 L1.75 0.5 L3.1 2 Z M0.4 5.3 L1.75 6.8 L3.1 5.3 Z" fill="#bbb"/></svg>
<div style="position:absolute;left:386.3px;top:45.3px;width:4.7px;height:8.900000000000006px;background:#ededed;border-left:0.5px solid #d0d0d0"></div>
<svg style="position:absolute;left:386.7px;top:48.199999999999996px;" width="4" height="3" viewBox="0 0 4 3"><path d="M0.6 0.6 L2 2.2 L3.4 0.6" stroke="#bbb" stroke-width="0.55" fill="none"/></svg>
<div style="position:absolute;left:174px;top:57px;width:1px;height:318.8px;background:#a8acb2"></div>
<div style="position:absolute;left:175px;top:57px;width:625px;height:318.8px;background:linear-gradient(to bottom,#1c2a44 0%,#233350 35%,#2b3c58 55%,#5a6a84 75%,#a6b1c8 100%);border-right:1px solid #8a92a0"></div>
<svg style="position:absolute;left:217px;top:88px;" width="194.0" height="256.5" viewBox="0 0 194.0 256.5"><g transform="translate(1.500,1.650)"><rect x="0" y="0" width="190.000" height="252.500" fill="#6c7e85"/><path d="M0 5.050 H190.000 M0 10.100 H190.000 M0 15.150 H190.000 M0 20.200 H190.000 M0 25.250 H190.000 M0 30.300 H190.000 M0 35.350 H190.000 M0 40.400 H190.000 M0 45.450 H190.000 M0 50.500 H190.000 M0 55.550 H190.000 M0 60.600 H190.000 M0 65.650 H190.000 M0 70.700 H190.000 M0 75.750 H190.000 M0 80.800 H190.000 M0 85.850 H190.000 M0 90.900 H190.000 M0 95.950 H190.000 M0 101.000 H190.000 M0 106.050 H190.000 M0 111.100 H190.000 M0 116.150 H190.000 M0 121.200 H190.000 M0 126.250 H190.000 M0 131.300 H190.000 M0 136.350 H190.000 M0 141.400 H190.000 M0 146.450 H190.000 M0 151.500 H190.000 M0 156.550 H190.000 M0 161.600 H190.000 M0 166.650 H190.000 M0 171.700 H190.000 M0 176.750 H190.000 M0 181.800 H190.000 M0 186.850 H190.000 M0 191.900 H190.000 M0 196.950 H190.000 M0 202.000 H190.000 M0 207.050 H190.000 M0 212.100 H190.000 M0 217.150 H190.000 M0 222.200 H190.000 M0 227.250 H190.000 M0 232.300 H190.000 M0 237.350 H190.000 M0 242.400 H190.000 M0 247.450 H190.000" stroke="#6a5058" stroke-width="1.0" fill="none"/><path d="M5.000 0 V252.500 M10.000 0 V252.500 M15.000 0 V252.500 M20.000 0 V252.500 M25.000 0 V252.500 M30.000 0 V252.500 M35.000 0 V252.500 M40.000 0 V252.500 M45.000 0 V252.500 M50.000 0 V252.500 M55.000 0 V252.500 M60.000 0 V252.500 M65.000 0 V252.500 M70.000 0 V252.500 M75.000 0 V252.500 M80.000 0 V252.500 M85.000 0 V252.500 M90.000 0 V252.500 M95.000 0 V252.500 M100.000 0 V252.500 M105.000 0 V252.500 M110.000 0 V252.500 M115.000 0 V252.500 M120.000 0 V252.500 M125.000 0 V252.500 M130.000 0 V252.500 M135.000 0 V252.500 M140.000 0 V252.500 M145.000 0 V252.500 M150.000 0 V252.500 M155.000 0 V252.500 M160.000 0 V252.500 M165.000 0 V252.500 M170.000 0 V252.500 M175.000 0 V252.500 M180.000 0 V252.500 M185.000 0 V252.500" stroke="#74444c" stroke-width="0.8" fill="none"/><rect x="0" y="0" width="190.000" height="252.500" fill="none" stroke="#e41c1c" stroke-width="1.2"/></g></svg>
<div style="position:absolute;left:408.5px;top:89.4px;width:347px;height:1px;background:#2a5a98"></div>
<svg style="position:absolute;left:217px;top:55px;" width="4" height="35" viewBox="0 0 4 35"><rect x="1.00" y="11.40" width="1.6" height="1.6" fill="#e0e020"/><rect x="1.25" y="14.85" width="1.1" height="1.1" fill="#b8b838"/><rect x="1.00" y="18.00" width="1.6" height="1.6" fill="#e0e020"/><rect x="1.25" y="21.45" width="1.1" height="1.1" fill="#b8b838"/><rect x="1.00" y="24.60" width="1.6" height="1.6" fill="#e0e020"/><rect x="1.25" y="28.25" width="1.1" height="1.1" fill="#b8b838"/><rect x="1.00" y="31.20" width="1.6" height="1.6" fill="#e0e020"/></svg>
<svg style="position:absolute;left:217px;top:340px;" width="4" height="32" viewBox="0 0 4 32"><rect x="1.25" y="3.65" width="1.1" height="1.1" fill="#b8b838"/><rect x="1.00" y="6.80" width="1.6" height="1.6" fill="#e0e020"/><rect x="1.25" y="10.45" width="1.1" height="1.1" fill="#b8b838"/><rect x="1.00" y="13.60" width="1.6" height="1.6" fill="#e0e020"/><rect x="1.25" y="17.25" width="1.1" height="1.1" fill="#b8b838"/><rect x="1.00" y="20.40" width="1.6" height="1.6" fill="#e0e020"/><rect x="1.25" y="24.05" width="1.1" height="1.1" fill="#b8b838"/><rect x="1.00" y="27.20" width="1.6" height="1.6" fill="#e0e020"/></svg>
<svg style="position:absolute;left:214px;top:83px;" width="18" height="11" viewBox="0 0 18 11"><path d="M2.2 4.2 L7.2 9.2 M2.2 9.2 L7.2 4.2" stroke="#c8c830" stroke-width="0.6"/><text x="8.2" y="6.2" font-family="Liberation Sans" font-size="5.2" fill="none" stroke="#d4d030" stroke-width="0.4">RP</text></svg>
<svg style="position:absolute;left:218px;top:316px;" width="38" height="36" viewBox="0 0 38 36"><text x="5" y="8.2" font-family="Liberation Sans" font-size="5.6" fill="#f4f4f8">Y</text><rect x="6.2" y="17" width="1.6" height="14" fill="#20b020"/><path d="M3.8 18.5 L7 11.8 L10.2 18.5 Z" fill="#20c020"/><rect x="9" y="30.2" width="12" height="1.7" fill="#b01010"/><path d="M19 27.8 L26.5 31 L19 34.2 Z" fill="#b81010"/><defs><radialGradient id="sph" cx="0.35" cy="0.3" r="0.75"><stop offset="0" stop-color="#7a80ff"/><stop offset="0.5" stop-color="#2028d0"/><stop offset="1" stop-color="#10148a"/></radialGradient></defs><circle cx="7" cy="31" r="3.3" fill="url(#sph)"/><path d="M5.8 29.5 H8.2 L5.9 32.6 H8.3" stroke="#e8e8ff" stroke-width="0.4" fill="none"/><text x="29.8" y="33.2" font-family="Liberation Sans" font-size="5.6" fill="#f4f4f8">X</text></svg>
<svg style="position:absolute;left:217px;top:305px;" width="30" height="40" viewBox="0 0 30 40"><path d="M2.5 7 L5 10 M2.5 10 L5 7" stroke="#e08020" stroke-width="0.5"/><circle cx="28" cy="35" r="1.3" fill="none" stroke="#e08020" stroke-width="0.5"/></svg>
<svg style="position:absolute;left:740px;top:57px;" width="45" height="47" viewBox="0 0 45 47"><text x="13.2" y="6" font-family="Liberation Sans" font-size="4.5" fill="#d0c840">Y</text><path d="M15.3 31 V14 A16.5 16.5 0 0 1 31.8 31 Z" fill="#1a6470" stroke="#c8b8e8" stroke-width="0.7"/><path d="M15.3 10 V44" stroke="#c8b8e8" stroke-width="0.8"/><circle cx="15.3" cy="10" r="1.5" fill="#d8c8f0"/><rect x="7" y="43.3" width="21" height="1.5" fill="#a89cc8"/><rect x="13.4" y="42" width="3.8" height="3.8" fill="#e01010"/><text x="33.5" y="33" font-family="Liberation Sans" font-size="4.5" fill="#d0c840">X</text><text x="14.2" y="33" font-family="Liberation Sans" font-size="3" fill="#d0c840">z</text></svg>
<div style="position:absolute;left:0px;top:55.3px;width:145px;height:334px;background:#f0f0f0"></div>
<div style="position:absolute;left:1.2px;top:45.8px;width:21px;height:10px;background:#fff;border:0.6px solid #dadada;border-bottom:none"></div>
<div style="position:absolute;left:22.2px;top:47px;width:22.8px;height:8.5px;background:#e9e9e9;border:0.6px solid #dadada;border-bottom:none"></div>
<div style="position:absolute;left:5px;top:48.2px;font-size:5.05px;line-height:6.06px;color:#333;white-space:nowrap;">Model</div>
<div style="position:absolute;left:26px;top:49px;font-size:5.05px;line-height:6.06px;color:#333;white-space:nowrap;">Results</div>
<div style="position:absolute;left:1.2px;top:55.3px;width:143.4px;height:334px;background:#fff;border:0.6px solid #e8e8e8;border-top-color:#dadada"></div>
<div style="position:absolute;left:2px;top:57.8px;width:103px;height:9.8px;background:#fff;border:0.6px solid #d0d0d0"></div>
<div style="position:absolute;left:99px;top:58.2px;width:5.6px;height:9px;background:#dedede"></div>
<svg style="position:absolute;left:99.3px;top:61.2px;" width="5" height="3" viewBox="0 0 5 3"><path d="M0.8 0.6 L2.5 2.2 L4.2 0.6" stroke="#777" stroke-width="0.55" fill="none"/></svg>
<svg style="position:absolute;left:3.3px;top:58.9px;" width="7.5" height="7.5" viewBox="0 0 7.5 7.5"><rect x="0.3" y="0.5" width="6.8" height="6.5" rx="0.6" fill="#c8a020"/><rect x="1" y="1.5" width="5.4" height="1.2" fill="#f0d060"/><rect x="1" y="3.4" width="5.4" height="1.2" fill="#705810"/><rect x="1" y="5.2" width="5.4" height="1.2" fill="#f0d060"/></svg>
<div style="position:absolute;left:12px;top:60.3px;font-size:5.05px;line-height:6.06px;color:#222;white-space:nowrap;">Model Database</div>
<svg style="position:absolute;left:107.5px;top:58.3px;" width="5" height="9" viewBox="0 0 5 9"><path d="M0.9 2.8 L2.5 1.3 L4.1 2.8 Z M0.9 6.2 L2.5 7.7 L4.1 6.2 Z" fill="#888"/></svg>
<svg style="position:absolute;left:114.5px;top:59.3px;" width="7" height="7" viewBox="0 0 7 7"><rect x="0.5" y="1.2" width="6" height="4.8" fill="#fafafa" stroke="#a8a8a8" stroke-width="0.45"/><path d="M0.5 1.2 H3" stroke="#a8a8a8" stroke-width="0.8"/><path d="M2.3 2.6 V4.6 H4" stroke="#777" stroke-width="0.45" fill="none"/></svg>
<svg style="position:absolute;left:125.2px;top:59px;" width="8.5" height="8" viewBox="0 0 8.5 8"><path d="M1 1.5 L3 0.8 L6.8 4.6 L5 6.4 L1.2 2.6 Z" fill="#f4f4f4" stroke="#a0a0a0" stroke-width="0.45"/><path d="M3.4 5 L5.4 7" stroke="#a0a0a0" stroke-width="0.45"/></svg>
<svg style="position:absolute;left:137px;top:58px;" width="8.5" height="9.5" viewBox="0 0 8.5 9.5"><circle cx="4.2" cy="4" r="2.3" fill="#f0e070" stroke="#b0a040" stroke-width="0.3"/><rect x="3.1" y="6.2" width="2.2" height="2.2" fill="#405a40"/><path d="M0.4 4 H1.3 M7.1 4 H8 M4.2 0.3 V1.1 M1.5 1.3 L2.1 1.9 M6.9 1.3 L6.3 1.9 M1.3 6.3 L2 5.8 M7.1 6.3 L6.4 5.8" stroke="#40a040" stroke-width="0.5"/></svg>
<div style="position:absolute;left:2.2px;top:69px;width:142.4px;height:320.4px;background:#fff;border-top:0.6px solid #d4d4d4;border-left:0.6px solid #cfcfcf;border-bottom:0.8px solid #d8d8d8"></div>
<div style="position:absolute;left:5.0px;top:75.9px;width:0.6px;height:225.89000000000001px;background:repeating-linear-gradient(#e2e2e2 0 0.9px,transparent 0.9px 1.8px)"></div>
<div style="position:absolute;left:12.0px;top:83.81px;width:0.6px;height:1.0px;background:repeating-linear-gradient(#e2e2e2 0 0.9px,transparent 0.9px 1.8px)"></div>
<div style="position:absolute;left:19.0px;top:84.81px;width:0.6px;height:202.66000000000003px;background:repeating-linear-gradient(#e2e2e2 0 0.9px,transparent 0.9px 1.8px)"></div>
<div style="position:absolute;left:12.0px;top:305.29px;width:0.6px;height:29.640000000000043px;background:repeating-linear-gradient(#e2e2e2 0 0.9px,transparent 0.9px 1.8px)"></div>
<svg style="position:absolute;left:3.0px;top:71.55000000000001px;" width="4.7" height="4.7" viewBox="0 0 4.7 4.7"><rect x="0.7" y="0.7" width="3.3" height="3.3" fill="#dedede" stroke="#c0c0c0" stroke-width="0.45"/><path d="M1.3 2.35 H3.4" stroke="#8a8a8a" stroke-width="0.45"/></svg>
<svg style="position:absolute;left:9px;top:70.4px;" width="7" height="7" viewBox="0 0 7 7"><rect x="0.5" y="2.5" width="2.5" height="4.5" fill="#505868"/><rect x="3.5" y="3.5" width="2.5" height="3.5" fill="#404850"/><path d="M1.7 0 L2.6 2.5 H0.8 Z" fill="#e03030"/><circle cx="4.8" cy="1.5" r="1" fill="none" stroke="#555" stroke-width="0.5"/><circle cx="5.3" cy="5.8" r="1" fill="#30a040"/></svg>
<div style="position:absolute;left:17.8px;top:71.10000000000001px;font-size:5.05px;line-height:6.06px;color:#222;white-space:nowrap;">Models (1)</div>
<svg style="position:absolute;left:10.0px;top:79.46000000000001px;" width="4.7" height="4.7" viewBox="0 0 4.7 4.7"><rect x="0.7" y="0.7" width="3.3" height="3.3" fill="#fbfbfb" stroke="#c0c0c0" stroke-width="0.45"/><path d="M1.3 2.35 H3.4" stroke="#8a8a8a" stroke-width="0.45"/></svg>
<div style="position:absolute;left:16px;top:79.01px;font-size:5.05px;line-height:6.06px;color:#222;white-space:nowrap;">Model-1</div>
<div style="position:absolute;left:16px;top:84.41px;width:20px;height:0.9px;background:#707070"></div>
<svg style="position:absolute;left:17.0px;top:87.37px;" width="4.7" height="4.7" viewBox="0 0 4.7 4.7"><rect x="0.7" y="0.7" width="3.3" height="3.3" fill="#fbfbfb" stroke="#c0c0c0" stroke-width="0.45"/><path d="M1.3 2.35 H3.4" stroke="#4a6ac0" stroke-width="0.45"/><path d="M2.35 1.3 V3.4" stroke="#4a6ac0" stroke-width="0.45"/></svg>
<svg style="position:absolute;left:23px;top:86.22px;" width="7" height="7" viewBox="0 0 7 7"><path d="M0.5 0.5 H2.8 V4.2 H6.5 V6.8 H0.5 Z" fill="#e0a020" stroke="#a07010" stroke-width="0.4"/></svg>
<div style="position:absolute;left:32px;top:86.92px;font-size:5.05px;line-height:6.06px;color:#222;white-space:nowrap;">Parts (2)</div>
<svg style="position:absolute;left:17.0px;top:95.28000000000002px;" width="4.7" height="4.7" viewBox="0 0 4.7 4.7"><rect x="0.7" y="0.7" width="3.3" height="3.3" fill="#fbfbfb" stroke="#c0c0c0" stroke-width="0.45"/><path d="M1.3 2.35 H3.4" stroke="#4a6ac0" stroke-width="0.45"/><path d="M2.35 1.3 V3.4" stroke="#4a6ac0" stroke-width="0.45"/></svg>
<svg style="position:absolute;left:23px;top:94.13000000000001px;" width="7" height="7" viewBox="0 0 7 7"><rect x="0.5" y="0.5" width="6" height="6.3" fill="#f4f4f8" stroke="#555" stroke-width="0.5"/><path d="M1 6 L3 3 L6 5 M1.5 1.5 L5 4" stroke="#6080c0" stroke-width="0.5" fill="none"/></svg>
<div style="position:absolute;left:32px;top:94.83000000000001px;font-size:5.05px;line-height:6.06px;color:#222;white-space:nowrap;">Materials (1)</div>
<div style="position:absolute;left:19.0px;top:105.54px;width:3.5px;height:0.6px;background:repeating-linear-gradient(90deg,#e2e2e2 0 0.9px,transparent 0.9px 1.8px)"></div>
<svg style="position:absolute;left:23px;top:102.04px;" width="7" height="7" viewBox="0 0 7 7"><circle cx="3.5" cy="3.5" r="2.8" fill="#dce4f4" stroke="#2a4aa0" stroke-width="0.8"/><circle cx="2.6" cy="2.6" r="0.9" fill="#d02020"/></svg>
<div style="position:absolute;left:32px;top:102.74000000000001px;font-size:5.05px;line-height:6.06px;color:#222;white-space:nowrap;">Calibrations</div>
<svg style="position:absolute;left:17.0px;top:111.10000000000001px;" width="4.7" height="4.7" viewBox="0 0 4.7 4.7"><rect x="0.7" y="0.7" width="3.3" height="3.3" fill="#fbfbfb" stroke="#c0c0c0" stroke-width="0.45"/><path d="M1.3 2.35 H3.4" stroke="#4a6ac0" stroke-width="0.45"/><path d="M2.35 1.3 V3.4" stroke="#4a6ac0" stroke-width="0.45"/></svg>
<svg style="position:absolute;left:23px;top:109.95px;" width="7" height="7" viewBox="0 0 7 7"><path d="M3.5 0.3 L5 2.5 L6.5 6.8 H0.5 L2 2.5 Z" fill="#e08820"/><circle cx="3.5" cy="3.5" r="1.5" fill="#303848"/><path d="M1 1 L6 1" stroke="#e03030" stroke-width="0.6"/></svg>
<div style="position:absolute;left:32px;top:110.65px;font-size:5.05px;line-height:6.06px;color:#222;white-space:nowrap;">Sections (1)</div>
<div style="position:absolute;left:19.0px;top:121.36000000000001px;width:3.5px;height:0.6px;background:repeating-linear-gradient(90deg,#e2e2e2 0 0.9px,transparent 0.9px 1.8px)"></div>
<svg style="position:absolute;left:23px;top:117.86000000000001px;" width="7" height="7" viewBox="0 0 7 7"><rect x="0.5" y="1.5" width="6" height="4" fill="#e08060"/><path d="M3.5 0.2 V6.8" stroke="#303848" stroke-width="1"/><path d="M1.5 1.5 V5.5 M5.5 1.5 V5.5" stroke="#c04030" stroke-width="0.5"/></svg>
<div style="position:absolute;left:32px;top:118.56000000000002px;font-size:5.05px;line-height:6.06px;color:#222;white-space:nowrap;">Profiles</div>
<svg style="position:absolute;left:17.0px;top:126.92000000000002px;" width="4.7" height="4.7" viewBox="0 0 4.7 4.7"><rect x="0.7" y="0.7" width="3.3" height="3.3" fill="#fbfbfb" stroke="#c0c0c0" stroke-width="0.45"/><path d="M1.3 2.35 H3.4" stroke="#4a6ac0" stroke-width="0.45"/><path d="M2.35 1.3 V3.4" stroke="#4a6ac0" stroke-width="0.45"/></svg>
<svg style="position:absolute;left:23px;top:125.77000000000001px;" width="7" height="7" viewBox="0 0 7 7"><rect x="0.5" y="2.5" width="2.5" height="4.5" fill="#505868"/><rect x="3.5" y="3.5" width="2.5" height="3.5" fill="#404850"/><path d="M1.7 0 L2.6 2.5 H0.8 Z" fill="#e03030"/><circle cx="4.8" cy="1.5" r="1" fill="none" stroke="#555" stroke-width="0.5"/><circle cx="5.3" cy="5.8" r="1" fill="#30a040"/></svg>
<div style="position:absolute;left:32px;top:126.47000000000001px;font-size:5.05px;line-height:6.06px;color:#222;white-space:nowrap;">Assembly</div>
<svg style="position:absolute;left:17.0px;top:134.83px;" width="4.7" height="4.7" viewBox="0 0 4.7 4.7"><rect x="0.7" y="0.7" width="3.3" height="3.3" fill="#fbfbfb" stroke="#c0c0c0" stroke-width="0.45"/><path d="M1.3 2.35 H3.4" stroke="#4a6ac0" stroke-width="0.45"/><path d="M2.35 1.3 V3.4" stroke="#4a6ac0" stroke-width="0.45"/></svg>
<svg style="position:absolute;left:23px;top:133.68px;" width="7" height="7" viewBox="0 0 7 7"><circle cx="1" cy="4.5" r="0.8" fill="none" stroke="#222" stroke-width="0.5"/><path d="M1.6 4 L4 1.5 L5.5 3" stroke="#222" stroke-width="0.6" fill="none"/><rect x="3.3" y="0.5" width="1.5" height="1.5" fill="#222"/><circle cx="5.5" cy="5.3" r="1.2" fill="#30a040"/></svg>
<div style="position:absolute;left:32px;top:134.38px;font-size:5.05px;line-height:6.06px;color:#222;white-space:nowrap;">Steps (2)</div>
<svg style="position:absolute;left:17.0px;top:142.74px;" width="4.7" height="4.7" viewBox="0 0 4.7 4.7"><rect x="0.7" y="0.7" width="3.3" height="3.3" fill="#fbfbfb" stroke="#c0c0c0" stroke-width="0.45"/><path d="M1.3 2.35 H3.4" stroke="#4a6ac0" stroke-width="0.45"/><path d="M2.35 1.3 V3.4" stroke="#4a6ac0" stroke-width="0.45"/></svg>
<svg style="position:absolute;left:23px;top:141.59px;" width="7" height="7" viewBox="0 0 7 7"><path d="M0.5 0.5 V6.5 H6.5" stroke="#555" stroke-width="0.5" fill="none"/><path d="M1.5 1.5 H5 M1.5 3 H4" stroke="#e04040" stroke-width="0.6"/><path d="M1 5 Q3 3.5 6.5 5" stroke="#e07030" stroke-width="0.6" fill="none"/></svg>
<div style="position:absolute;left:32px;top:142.29px;font-size:5.05px;line-height:6.06px;color:#222;white-space:nowrap;">Field Output Requests (1)</div>
<svg style="position:absolute;left:17.0px;top:150.65px;" width="4.7" height="4.7" viewBox="0 0 4.7 4.7"><rect x="0.7" y="0.7" width="3.3" height="3.3" fill="#fbfbfb" stroke="#c0c0c0" stroke-width="0.45"/><path d="M1.3 2.35 H3.4" stroke="#4a6ac0" stroke-width="0.45"/><path d="M2.35 1.3 V3.4" stroke="#4a6ac0" stroke-width="0.45"/></svg>
<svg style="position:absolute;left:23px;top:149.5px;" width="7" height="7" viewBox="0 0 7 7"><path d="M0.5 0.5 V6.5 H6.5" stroke="#555" stroke-width="0.5" fill="none"/><path d="M1.5 1.5 H5 M1.5 3 H4" stroke="#e04040" stroke-width="0.6"/><path d="M1 6 L3 4 L5 5 L6.5 3" stroke="#d02020" stroke-width="0.6" fill="none"/></svg>
<div style="position:absolute;left:32px;top:150.2px;font-size:5.05px;line-height:6.06px;color:#222;white-space:nowrap;">History Output Requests (1)</div>
<div style="position:absolute;left:19.0px;top:160.91000000000003px;width:3.5px;height:0.6px;background:repeating-linear-gradient(90deg,#e2e2e2 0 0.9px,transparent 0.9px 1.8px)"></div>
<svg style="position:absolute;left:23px;top:157.41000000000003px;" width="7" height="7" viewBox="0 0 7 7"><path d="M0.5 1 V6.5 H6.5" stroke="#333" stroke-width="0.6" fill="none"/><path d="M1 3.5 H6" stroke="#3050c0" stroke-width="0.7"/><circle cx="1.5" cy="2" r="0.5" fill="#3050c0"/></svg>
<div style="position:absolute;left:32px;top:158.11px;font-size:5.05px;line-height:6.06px;color:#222;white-space:nowrap;">Time Points</div>
<div style="position:absolute;left:19.0px;top:168.82px;width:3.5px;height:0.6px;background:repeating-linear-gradient(90deg,#e2e2e2 0 0.9px,transparent 0.9px 1.8px)"></div>
<svg style="position:absolute;left:23px;top:165.32px;" width="7" height="7" viewBox="0 0 7 7"><path d="M0.5 0.5 H2.5 V4 H6.5 V6.5 H0.5 Z" fill="#8898b8" stroke="#405070" stroke-width="0.4"/><rect x="0.5" y="6" width="6" height="0.8" fill="#e03030"/></svg>
<div style="position:absolute;left:32px;top:166.01999999999998px;font-size:5.05px;line-height:6.06px;color:#222;white-space:nowrap;">ALE Adaptive Mesh Constraints</div>
<svg style="position:absolute;left:17.0px;top:174.38000000000002px;" width="4.7" height="4.7" viewBox="0 0 4.7 4.7"><rect x="0.7" y="0.7" width="3.3" height="3.3" fill="#fbfbfb" stroke="#c0c0c0" stroke-width="0.45"/><path d="M1.3 2.35 H3.4" stroke="#4a6ac0" stroke-width="0.45"/><path d="M2.35 1.3 V3.4" stroke="#4a6ac0" stroke-width="0.45"/></svg>
<svg style="position:absolute;left:23px;top:173.23000000000002px;" width="7" height="7" viewBox="0 0 7 7"><rect x="0.5" y="0.5" width="6" height="1.4" fill="#30a040"/><rect x="0.5" y="5.3" width="6" height="1.4" fill="#30a040"/><rect x="1.6" y="1.9" width="1.2" height="3.4" fill="#404850"/><rect x="4.2" y="1.9" width="1.2" height="3.4" fill="#404850"/></svg>
<div style="position:absolute;left:32px;top:173.93px;font-size:5.05px;line-height:6.06px;color:#222;white-space:nowrap;">Interactions (1)</div>
<svg style="position:absolute;left:17.0px;top:182.29000000000002px;" width="4.7" height="4.7" viewBox="0 0 4.7 4.7"><rect x="0.7" y="0.7" width="3.3" height="3.3" fill="#fbfbfb" stroke="#c0c0c0" stroke-width="0.45"/><path d="M1.3 2.35 H3.4" stroke="#4a6ac0" stroke-width="0.45"/><path d="M2.35 1.3 V3.4" stroke="#4a6ac0" stroke-width="0.45"/></svg>
<svg style="position:absolute;left:23px;top:181.14000000000001px;" width="7" height="7" viewBox="0 0 7 7"><rect x="0.5" y="0.5" width="6" height="1.4" fill="#a0c030"/><rect x="0.5" y="5.3" width="6" height="1.4" fill="#3050c0"/><rect x="1.6" y="1.9" width="1.2" height="3.4" fill="#e0c020"/><rect x="4.2" y="1.9" width="1.2" height="3.4" fill="#e03030"/></svg>
<div style="position:absolute;left:32px;top:181.84px;font-size:5.05px;line-height:6.06px;color:#222;white-space:nowrap;">Interaction Properties (1)</div>
<div style="position:absolute;left:19.0px;top:192.55px;width:3.5px;height:0.6px;background:repeating-linear-gradient(90deg,#e2e2e2 0 0.9px,transparent 0.9px 1.8px)"></div>
<svg style="position:absolute;left:23px;top:189.05px;" width="7" height="7" viewBox="0 0 7 7"><path d="M1.5 0.5 Q0 3.5 1.5 6.5" stroke="#6070d0" stroke-width="0.9" fill="none"/><path d="M5.5 0.5 Q7 3.5 5.5 6.5" stroke="#6070d0" stroke-width="0.9" fill="none"/><rect x="2.3" y="1.5" width="2.4" height="4" fill="#f0c030"/></svg>
<div style="position:absolute;left:32px;top:189.75px;font-size:5.05px;line-height:6.06px;color:#222;white-space:nowrap;">Contact Controls</div>
<div style="position:absolute;left:19.0px;top:200.46px;width:3.5px;height:0.6px;background:repeating-linear-gradient(90deg,#e2e2e2 0 0.9px,transparent 0.9px 1.8px)"></div>
<svg style="position:absolute;left:23px;top:196.96px;" width="7" height="7" viewBox="0 0 7 7"><path d="M3.5 0.3 L4.5 2 H2.5 Z" fill="#e03030"/><rect x="0.8" y="2.5" width="5.5" height="4" fill="#f0c030"/><path d="M1.2 6 L5.5 3" stroke="#30a040" stroke-width="0.8"/><rect x="0.5" y="2.5" width="1.2" height="4.3" fill="#e05030"/></svg>
<div style="position:absolute;left:32px;top:197.66px;font-size:5.05px;line-height:6.06px;color:#222;white-space:nowrap;">Contact Initializations</div>
<div style="position:absolute;left:19.0px;top:208.37px;width:3.5px;height:0.6px;background:repeating-linear-gradient(90deg,#e2e2e2 0 0.9px,transparent 0.9px 1.8px)"></div>
<svg style="position:absolute;left:23px;top:204.87px;" width="7" height="7" viewBox="0 0 7 7"><path d="M1 0.5 L3.5 2 L6 0.5" stroke="#30c060" stroke-width="0.6" fill="none"/><rect x="0.8" y="2.5" width="5.5" height="4" fill="#f0c030"/><path d="M1.2 6 L5.5 3" stroke="#30a040" stroke-width="0.8"/><rect x="0.5" y="2.5" width="1.2" height="4.3" fill="#e05030"/></svg>
<div style="position:absolute;left:32px;top:205.57px;font-size:5.05px;line-height:6.06px;color:#222;white-space:nowrap;">Contact Stabilizations</div>
<div style="position:absolute;left:19.0px;top:216.28px;width:3.5px;height:0.6px;background:repeating-linear-gradient(90deg,#e2e2e2 0 0.9px,transparent 0.9px 1.8px)"></div>
<svg style="position:absolute;left:23px;top:212.78px;" width="7" height="7" viewBox="0 0 7 7"><path d="M0.3 3.5 L2.5 1.5 V5.5 Z" fill="#404850"/><rect x="3" y="0.5" width="3.5" height="6" fill="#f0d040" stroke="#555" stroke-width="0.5"/><path d="M4 2 H5.5 M4 3.5 H5.5 M4 5 H5.5" stroke="#555" stroke-width="0.4"/></svg>
<div style="position:absolute;left:32px;top:213.48px;font-size:5.05px;line-height:6.06px;color:#222;white-space:nowrap;">Constraints</div>
<div style="position:absolute;left:19.0px;top:224.19px;width:3.5px;height:0.6px;background:repeating-linear-gradient(90deg,#e2e2e2 0 0.9px,transparent 0.9px 1.8px)"></div>
<svg style="position:absolute;left:23px;top:220.69px;" width="7" height="7" viewBox="0 0 7 7"><rect x="0.3" y="0.5" width="6.4" height="6" fill="#606870" stroke="#303040" stroke-width="0.5"/><rect x="1.5" y="2" width="4" height="3" fill="#b0a080"/><rect x="2.7" y="3" width="1.6" height="1.2" fill="#d02020"/></svg>
<div style="position:absolute;left:32px;top:221.39px;font-size:5.05px;line-height:6.06px;color:#222;white-space:nowrap;">Connector Sections</div>
<svg style="position:absolute;left:17.0px;top:229.75px;" width="4.7" height="4.7" viewBox="0 0 4.7 4.7"><rect x="0.7" y="0.7" width="3.3" height="3.3" fill="#fbfbfb" stroke="#c0c0c0" stroke-width="0.45"/><path d="M1.3 2.35 H3.4" stroke="#4a6ac0" stroke-width="0.45"/><path d="M2.35 1.3 V3.4" stroke="#4a6ac0" stroke-width="0.45"/></svg>
<svg style="position:absolute;left:23px;top:228.6px;" width="7" height="7" viewBox="0 0 7 7"><path d="M5.8 0.8 Q3 0.3 3 2.5 L2.5 6 Q2 7 0.8 6.5 M1.8 3.5 H5" stroke="#111" stroke-width="0.8" fill="none"/></svg>
<div style="position:absolute;left:32px;top:229.29999999999998px;font-size:5.05px;line-height:6.06px;color:#222;white-space:nowrap;">Fields</div>
<div style="position:absolute;left:19.0px;top:240.01000000000002px;width:3.5px;height:0.6px;background:repeating-linear-gradient(90deg,#e2e2e2 0 0.9px,transparent 0.9px 1.8px)"></div>
<svg style="position:absolute;left:23px;top:236.51000000000002px;" width="7" height="7" viewBox="0 0 7 7"><path d="M0.5 6 V2 Q0.5 0.5 2 0.8 Q3.2 1.2 3.3 4 Q3.5 6.5 5 6.3 Q6.5 6 6.5 3" stroke="#d03030" stroke-width="0.7" fill="none"/><path d="M0.3 6.7 H4" stroke="#6080c0" stroke-width="0.4"/></svg>
<div style="position:absolute;left:32px;top:237.21px;font-size:5.05px;line-height:6.06px;color:#222;white-space:nowrap;">Amplitudes</div>
<div style="position:absolute;left:19.0px;top:247.92000000000002px;width:3.5px;height:0.6px;background:repeating-linear-gradient(90deg,#e2e2e2 0 0.9px,transparent 0.9px 1.8px)"></div>
<svg style="position:absolute;left:23px;top:244.42000000000002px;" width="7" height="7" viewBox="0 0 7 7"><path d="M0.5 0.5 H2.5 V4 H6.5 V6.8 H0.5 Z" fill="#c8d4ec" stroke="#3050a0" stroke-width="0.5"/><path d="M4.5 0.5 V4" stroke="#e02020" stroke-width="0.8"/><path d="M3.3 2.8 L4.5 4.3 L5.7 2.8 Z" fill="#e02020"/></svg>
<div style="position:absolute;left:32px;top:245.12px;font-size:5.05px;line-height:6.06px;color:#222;white-space:nowrap;">Loads</div>
<svg style="position:absolute;left:17.0px;top:253.48000000000002px;" width="4.7" height="4.7" viewBox="0 0 4.7 4.7"><rect x="0.7" y="0.7" width="3.3" height="3.3" fill="#fbfbfb" stroke="#c0c0c0" stroke-width="0.45"/><path d="M1.3 2.35 H3.4" stroke="#4a6ac0" stroke-width="0.45"/><path d="M2.35 1.3 V3.4" stroke="#4a6ac0" stroke-width="0.45"/></svg>
<svg style="position:absolute;left:23px;top:252.33px;" width="7" height="7" viewBox="0 0 7 7"><path d="M0.5 0.5 H2.5 V4 H6.5 V6 H0.5 Z" fill="#c8d4ec" stroke="#3050a0" stroke-width="0.5"/><rect x="0.3" y="6" width="6.4" height="0.9" fill="#e02020"/></svg>
<div style="position:absolute;left:32px;top:253.03px;font-size:5.05px;line-height:6.06px;color:#222;white-space:nowrap;">BCs (2)</div>
<div style="position:absolute;left:19.0px;top:263.74px;width:3.5px;height:0.6px;background:repeating-linear-gradient(90deg,#e2e2e2 0 0.9px,transparent 0.9px 1.8px)"></div>
<svg style="position:absolute;left:23px;top:260.24px;" width="7" height="7" viewBox="0 0 7 7"><path d="M0.5 0.5 H2.5 V4 H6.5 V6.8 H0.5 Z" fill="#d8d040" stroke="#606020" stroke-width="0.5"/><rect x="0.8" y="4.5" width="2" height="2" fill="#30a040"/><rect x="4" y="4.5" width="2" height="2" fill="#e04030"/></svg>
<div style="position:absolute;left:32px;top:260.94px;font-size:5.05px;line-height:6.06px;color:#222;white-space:nowrap;">Predefined Fields</div>
<div style="position:absolute;left:19.0px;top:271.65px;width:3.5px;height:0.6px;background:repeating-linear-gradient(90deg,#e2e2e2 0 0.9px,transparent 0.9px 1.8px)"></div>
<svg style="position:absolute;left:23px;top:268.15px;" width="7" height="7" viewBox="0 0 7 7"><rect x="0.3" y="0.3" width="4" height="4.5" fill="#e8e8ec" stroke="#444" stroke-width="0.5"/><rect x="3" y="3" width="3.8" height="3.8" fill="#303860" stroke="#222" stroke-width="0.4"/><path d="M3.5 4 H6.5 M4.5 3.2 V6.5" stroke="#8890b0" stroke-width="0.3"/></svg>
<div style="position:absolute;left:31px;top:267.65px;width:39.6px;height:8px;background:#0a78d7"></div>
<div style="position:absolute;left:32px;top:268.84999999999997px;font-size:5.05px;line-height:6.06px;color:#fff;white-space:nowrap;letter-spacing:-0.12px">Remeshing Rules</div>
<div style="position:absolute;left:19.0px;top:279.56px;width:3.5px;height:0.6px;background:repeating-linear-gradient(90deg,#e2e2e2 0 0.9px,transparent 0.9px 1.8px)"></div>
<svg style="position:absolute;left:23px;top:276.06px;" width="7" height="7" viewBox="0 0 7 7"><rect x="0.3" y="0.5" width="2.6" height="6" fill="#e0a030"/><rect x="4.1" y="0.5" width="2.6" height="6" fill="#30a050"/><path d="M0.3 3.5 L3.5 1.5 L6.7 3.5 L3.5 5.5 Z" fill="#d04020"/></svg>
<div style="position:absolute;left:32px;top:276.76px;font-size:5.05px;line-height:6.06px;color:#222;white-space:nowrap;">Optimization Tasks</div>
<div style="position:absolute;left:19.0px;top:287.47px;width:3.5px;height:0.6px;background:repeating-linear-gradient(90deg,#e2e2e2 0 0.9px,transparent 0.9px 1.8px)"></div>
<svg style="position:absolute;left:23px;top:283.97px;" width="7" height="7" viewBox="0 0 7 7"><path d="M0.8 0.5 H2.8 V4.2 H6.5 V6.7 H0.8 Z" fill="#fff" stroke="#e03030" stroke-width="0.7"/></svg>
<div style="position:absolute;left:32px;top:284.67px;font-size:5.05px;line-height:6.06px;color:#222;white-space:nowrap;">Sketches</div>
<div style="position:absolute;left:5.0px;top:295.38px;width:3.5px;height:0.6px;background:repeating-linear-gradient(90deg,#e2e2e2 0 0.9px,transparent 0.9px 1.8px)"></div>
<svg style="position:absolute;left:9px;top:291.88px;" width="7" height="7" viewBox="0 0 7 7"><path d="M0.5 3.5 L2.5 6 L6 0.8" stroke="#222" stroke-width="0.7" fill="none"/><path d="M4.5 0.5 L6.5 0.5 L6.3 2.5 Z" fill="#222"/></svg>
<div style="position:absolute;left:17.8px;top:292.58px;font-size:5.05px;line-height:6.06px;color:#222;white-space:nowrap;">Annotations</div>
<svg style="position:absolute;left:3.0px;top:300.94px;" width="4.7" height="4.7" viewBox="0 0 4.7 4.7"><rect x="0.7" y="0.7" width="3.3" height="3.3" fill="#dedede" stroke="#c0c0c0" stroke-width="0.45"/><path d="M1.3 2.35 H3.4" stroke="#8a8a8a" stroke-width="0.45"/></svg>
<svg style="position:absolute;left:9px;top:299.79px;" width="7" height="7" viewBox="0 0 7 7"><path d="M1.7 0.3 L3 2 H0.4 Z M1.7 6.7 L3 5 H0.4 Z M5.3 0.3 L6.6 2 H4 Z M5.3 6.7 L6.6 5 H4 Z" fill="#2040a0"/><rect x="1.1" y="2" width="1.2" height="3" fill="#2040a0"/><rect x="4.7" y="2" width="1.2" height="3" fill="#2040a0"/></svg>
<div style="position:absolute;left:17.8px;top:300.49px;font-size:5.05px;line-height:6.06px;color:#222;white-space:nowrap;">Analysis</div>
<div style="position:absolute;left:12.0px;top:311.20000000000005px;width:3.5px;height:0.6px;background:repeating-linear-gradient(90deg,#e2e2e2 0 0.9px,transparent 0.9px 1.8px)"></div>
<svg style="position:absolute;left:15.5px;top:307.70000000000005px;" width="7" height="7" viewBox="0 0 7 7"><rect x="1" y="0.5" width="5" height="3.5" fill="#3a6ad0" stroke="#203080" stroke-width="0.4"/><rect x="3" y="4" width="1" height="1.3" fill="#333"/><rect x="0.3" y="5.3" width="6.4" height="1.4" fill="#555"/></svg>
<div style="position:absolute;left:24.5px;top:308.40000000000003px;font-size:5.05px;line-height:6.06px;color:#222;white-space:nowrap;">Jobs</div>
<div style="position:absolute;left:12.0px;top:319.11px;width:3.5px;height:0.6px;background:repeating-linear-gradient(90deg,#e2e2e2 0 0.9px,transparent 0.9px 1.8px)"></div>
<svg style="position:absolute;left:15.5px;top:315.61px;" width="7" height="7" viewBox="0 0 7 7"><rect x="0.3" y="0.3" width="3.5" height="3.5" fill="#5070b0" stroke="#203060" stroke-width="0.4"/><rect x="3.2" y="3" width="3.5" height="3.8" fill="#405890" stroke="#203060" stroke-width="0.4"/><path d="M0.8 4.5 Q1.5 6.5 3.5 6" stroke="#e02020" stroke-width="0.7" fill="none"/></svg>
<div style="position:absolute;left:24.5px;top:316.31px;font-size:5.05px;line-height:6.06px;color:#222;white-space:nowrap;">Adaptivity Processes</div>
<div style="position:absolute;left:12.0px;top:327.02px;width:3.5px;height:0.6px;background:repeating-linear-gradient(90deg,#e2e2e2 0 0.9px,transparent 0.9px 1.8px)"></div>
<svg style="position:absolute;left:15.5px;top:323.52px;" width="7" height="7" viewBox="0 0 7 7"><rect x="0.3" y="0.5" width="2.8" height="6" fill="#8090c8" stroke="#304080" stroke-width="0.4"/><rect x="3.9" y="0.5" width="2.8" height="6" fill="#8090c8" stroke="#304080" stroke-width="0.4"/><path d="M0.8 2 H2.6 M0.8 3.5 H2.6 M4.4 2 H6.2 M4.4 5 H6.2" stroke="#fff" stroke-width="0.4"/><path d="M2.5 4.5 L4.5 4.5" stroke="#d02020" stroke-width="0.7"/></svg>
<div style="position:absolute;left:24.5px;top:324.21999999999997px;font-size:5.05px;line-height:6.06px;color:#222;white-space:nowrap;">Co-executions</div>
<div style="position:absolute;left:12.0px;top:334.93000000000006px;width:3.5px;height:0.6px;background:repeating-linear-gradient(90deg,#e2e2e2 0 0.9px,transparent 0.9px 1.8px)"></div>
<svg style="position:absolute;left:15.5px;top:331.43000000000006px;" width="7" height="7" viewBox="0 0 7 7"><rect x="0.3" y="0.5" width="2.6" height="6" fill="#e0a030"/><rect x="4.1" y="0.5" width="2.6" height="6" fill="#30a050"/><path d="M0.3 3.5 L3.5 1.5 L6.7 3.5 L3.5 5.5 Z" fill="#d04020"/></svg>
<div style="position:absolute;left:24.5px;top:332.13000000000005px;font-size:5.05px;line-height:6.06px;color:#222;white-space:nowrap;">Optimization Processes</div>
<div style="position:absolute;left:144.6px;top:56.4px;width:29.4px;height:319.5px;background:linear-gradient(90deg,#f4f4f4,#fbfbfb 15%,#f2f2f2 90%,#ececec)"></div>
<div style="position:absolute;left:144.2px;top:55.3px;width:0.7px;height:334px;background:#d4d4d4"></div>
<div style="position:absolute;left:147.5px;top:116.4px;width:26px;height:0.6px;background:#dedede"></div>
<div style="position:absolute;left:147.5px;top:131.1px;width:26px;height:0.6px;background:#dedede"></div>
<div style="position:absolute;left:147.5px;top:158.5px;width:26px;height:0.6px;background:#dedede"></div>
<div style="position:absolute;left:147.5px;top:185px;width:26px;height:0.6px;background:#dedede"></div>
<div style="position:absolute;left:147.5px;top:209.5px;width:26px;height:0.6px;background:#dedede"></div>
<div style="position:absolute;left:147.5px;top:236.8px;width:26px;height:0.6px;background:#dedede"></div>
<svg style="position:absolute;left:148.8px;top:58.6px;" width="10" height="10" viewBox="0 0 10 10"><path d="M0.8 0.8 H3.5 V5 H8.3 V8.3 H0.8 Z" fill="#d8e4f4" stroke="#98a8c8" stroke-width="0.4"/><path d="M0.8 0.8 H3.5 V5 H8.3 V8.3 H0.8 Z" fill="none" stroke="#e03030" stroke-width="0.6" stroke-dasharray="0.8 1.1"/><rect x="8.3" y="8.3" width="1.1" height="1.1" fill="#222"/></svg>
<svg style="position:absolute;left:160.8px;top:58.6px;" width="10" height="10" viewBox="0 0 10 10"><path d="M0.8 0.8 H3.5 V5 H8.3 V8.3 H0.8 Z" fill="#d8e4f4" stroke="#98a8c8" stroke-width="0.4"/><path d="M0.8 8.3 H8.3" stroke="#e03030" stroke-width="0.6" stroke-dasharray="0.8 1.1"/><rect x="8.3" y="8.3" width="1.1" height="1.1" fill="#222"/></svg>
<svg style="position:absolute;left:148.8px;top:70.8px;" width="10" height="10" viewBox="0 0 10 10"><path d="M0.8 0.8 H3.5 V5 H8.3 V8.3 H0.8 Z" fill="#8aa0c8" stroke="#4a6090" stroke-width="0.4"/><path d="M0.8 3 H3.5 M0.8 5 H8.3 M2.2 0.8 V8.3 M5 5 V8.3 M6.6 5 V8.3 M0.8 6.7 H8.3" stroke="#c0d0ec" stroke-width="0.3"/><rect x="8.3" y="8.3" width="1.1" height="1.1" fill="#222"/></svg>
<svg style="position:absolute;left:160.8px;top:70.8px;" width="10" height="10" viewBox="0 0 10 10"><path d="M0.8 0.8 H3.5 V5 H8.3 V8.3 H0.8 Z" fill="#8aa0c8" stroke="#4a6090" stroke-width="0.4"/><path d="M0.8 3 H3.5 M0.8 5 H8.3 M2.2 0.8 V8.3 M5 5 V8.3 M6.6 5 V8.3 M0.8 6.7 H8.3" stroke="#c0d0ec" stroke-width="0.3"/><path d="M4.5 3.5 H8.5" stroke="#e02020" stroke-width="1"/></svg>
<svg style="position:absolute;left:148.8px;top:83.2px;" width="10" height="10" viewBox="0 0 10 10"><path d="M0.8 4 L4 1.5 V7 L0.8 9 Z" fill="#8aa0c8" stroke="#4a6090" stroke-width="0.35"/><path d="M5 1 L9 0.5 V6.5 L5 8 Z" fill="#8aa0c8" stroke="#4a6090" stroke-width="0.35"/><path d="M1.5 5 H6" stroke="#e02020" stroke-width="0.9"/></svg>
<svg style="position:absolute;left:160.8px;top:83.2px;" width="10" height="10" viewBox="0 0 10 10"><path d="M1 3 L4.5 1 V8 L1 9.3 Z" fill="#d8a040" stroke="#806020" stroke-width="0.35"/><path d="M4.5 1 L8.5 0.8 V7.5 L4.5 8 Z" fill="#8aa0c8" stroke="#4a6090" stroke-width="0.35"/><rect x="8.3" y="8.3" width="1.1" height="1.1" fill="#222"/></svg>
<svg style="position:absolute;left:148.8px;top:95.6px;" width="10" height="10" viewBox="0 0 10 10"><path d="M0.8 0.8 H3.5 V5 H8.3 V8.3 H0.8 Z" fill="#8aa0c8" stroke="#4a6090" stroke-width="0.4"/><path d="M0.8 3 H3.5 M0.8 5 H8.3 M2.2 0.8 V8.3 M5 5 V8.3 M6.6 5 V8.3 M0.8 6.7 H8.3" stroke="#c0d0ec" stroke-width="0.3"/><path d="M4 3.2 L5 4.2 L6 3.2 L7 4.2 L8 3.2" stroke="#e02020" stroke-width="0.6" fill="none"/><rect x="8.3" y="8.3" width="1.1" height="1.1" fill="#222"/></svg>
<svg style="position:absolute;left:160.8px;top:95.6px;" width="10" height="10" viewBox="0 0 10 10"><path d="M0.8 0.8 H3.5 V5 H8.3 V8.3 H0.8 Z" fill="#8aa0c8" stroke="#4a6090" stroke-width="0.4"/><path d="M0.8 3 H3.5 M0.8 5 H8.3 M2.2 0.8 V8.3 M5 5 V8.3 M6.6 5 V8.3 M0.8 6.7 H8.3" stroke="#c0d0ec" stroke-width="0.3"/><path d="M4.3 3.3 L5.6 4.6 L8.5 1.2" stroke="#20a020" stroke-width="0.8" fill="none"/></svg>
<svg style="position:absolute;left:148.8px;top:105.6px;" width="10" height="10" viewBox="0 0 10 10"><path d="M0.8 3 L3 0.8 H9 V6.8 L6.8 9 H0.8 Z" fill="#e0a030" stroke="#806020" stroke-width="0.4"/><rect x="0.8" y="3" width="6" height="6" fill="#8aa0c8" stroke="#4a6090" stroke-width="0.35"/><path d="M1.5 5 H6 M1.5 7.3 H6" stroke="#e02020" stroke-width="0.8"/><rect x="8.3" y="8.3" width="1.1" height="1.1" fill="#222"/></svg>
<div style="position:absolute;left:148.4px;top:119.2px;width:11.6px;height:11.2px;background:#cce4f7;border:0.5px solid #b8daf4"></div>
<svg style="position:absolute;left:149.4px;top:120px;" width="10" height="10" viewBox="0 0 10 10"><rect x="0.8" y="0.5" width="4.5" height="5" fill="#e8e8ec" stroke="#666" stroke-width="0.4"/><rect x="3.5" y="3.5" width="5" height="5" fill="#505a7a" stroke="#333" stroke-width="0.4"/><path d="M4 5 H8 M5.5 4 V8" stroke="#a0a8c0" stroke-width="0.3"/><rect x="8.3" y="8.3" width="1.1" height="1.1" fill="#222"/></svg>
<svg style="position:absolute;left:160.8px;top:120.3px;" width="11" height="10" viewBox="0 0 11 10"><rect x="0.5" y="0.8" width="10" height="8" fill="#e8e4d8" stroke="#707070" stroke-width="0.5"/><rect x="0.5" y="0.8" width="10" height="2" fill="#4a6ab0"/><rect x="1.5" y="4.2" width="2" height="1.5" fill="#8a8070"/><rect x="4.5" y="4.2" width="2" height="1.5" fill="#8a8070"/><rect x="7.5" y="4.2" width="2" height="1.5" fill="#8a8070"/><rect x="1.5" y="6.5" width="2" height="1.5" fill="#8a8070"/><rect x="4.5" y="6.5" width="2" height="1.5" fill="#8a8070"/><rect x="7.5" y="6.5" width="2" height="1.5" fill="#8a8070"/></svg>
<svg style="position:absolute;left:148.8px;top:135.2px;" width="10" height="10" viewBox="0 0 10 10"><rect x="2" y="0.5" width="3" height="6" fill="#f0c040" stroke="#a07010" stroke-width="0.35"/><rect x="0.5" y="6.5" width="8" height="2.5" fill="#f0c040" stroke="#a07010" stroke-width="0.35"/><path d="M5.5 2 H8 M5.5 3.5 H8" stroke="#e03030" stroke-width="0.6"/><rect x="8.3" y="8.3" width="1.1" height="1.1" fill="#222"/></svg>
<svg style="position:absolute;left:160.8px;top:135.2px;" width="10" height="10" viewBox="0 0 10 10"><rect x="1.5" y="2" width="2" height="5" fill="#e8d090" stroke="#a08020" stroke-width="0.35"/><rect x="0.5" y="6.5" width="8" height="2.5" fill="#f0c040" stroke="#a07010" stroke-width="0.35"/><path d="M4.5 4.5 H8" stroke="#e02020" stroke-width="0.9"/><rect x="8.3" y="8.3" width="1.1" height="1.1" fill="#222"/></svg>
<svg style="position:absolute;left:148.8px;top:146px;" width="10" height="10" viewBox="0 0 10 10"><rect x="0.5" y="6" width="8" height="3" fill="#f0c040" stroke="#a07010" stroke-width="0.35"/><path d="M3 5.5 L7.5 1" stroke="#e0a020" stroke-width="1.3"/><path d="M2.5 3 L4.5 5.5" stroke="#e05090" stroke-width="0.6"/><path d="M7 0.5 L8.5 1.5" stroke="#6060e0" stroke-width="0.6"/></svg>
<svg style="position:absolute;left:148.8px;top:160.6px;" width="10" height="10" viewBox="0 0 10 10"><path d="M0.5 2 H9" stroke="#6a7aa0" stroke-width="0.6" stroke-dasharray="0.8 0.8"/><circle cx="4" cy="2" r="1" fill="#3060d0"/><path d="M4.5 3.5 L8 7.5 L6.5 7.6 L7.5 9.3" stroke="#444" stroke-width="0.5" fill="#fff"/></svg>
<svg style="position:absolute;left:160.8px;top:160.6px;" width="10" height="10" viewBox="0 0 10 10"><path d="M1 1 H3.5 V5.5 H8.5 V8.3 H1 Z" fill="#f0c040" stroke="#a07010" stroke-width="0.35"/><rect x="8.3" y="8.3" width="1.1" height="1.1" fill="#222"/></svg>
<svg style="position:absolute;left:148.8px;top:172.6px;" width="10" height="10" viewBox="0 0 10 10"><path d="M1 1 H3.5 V5.5 H8.5 V8.3 H1 Z" fill="#f0c040" stroke="#a07010" stroke-width="0.35"/><rect x="3" y="5" width="3" height="3" fill="#e04030"/><rect x="8.3" y="8.3" width="1.1" height="1.1" fill="#222"/></svg>
<svg style="position:absolute;left:160.8px;top:172.6px;" width="10" height="10" viewBox="0 0 10 10"><path d="M1 1 H3.5 V5.5 H8.5 V8.3 H1 Z" fill="#f0c040" stroke="#a07010" stroke-width="0.35"/><path d="M5 4 V9.5 M3.5 7 H8" stroke="#e02020" stroke-width="0.6"/><rect x="8.3" y="8.3" width="1.1" height="1.1" fill="#222"/></svg>
<svg style="position:absolute;left:148.8px;top:188px;" width="10" height="10" viewBox="0 0 10 10"><text x="0" y="4" font-family="Liberation Sans" font-size="3.6" fill="#222">(xyz)</text><circle cx="4.5" cy="7" r="0.9" fill="#3060d0"/></svg>
<svg style="position:absolute;left:160.8px;top:188px;" width="10" height="10" viewBox="0 0 10 10"><path d="M5 0.5 V5.5 L1.5 8.5 M5 5.5 L8.5 8.5" stroke="#222" stroke-width="0.6" fill="none"/><rect x="8.3" y="8.3" width="1.1" height="1.1" fill="#222"/></svg>
<svg style="position:absolute;left:148.8px;top:198.8px;" width="10" height="10" viewBox="0 0 10 10"><path d="M0.5 3 L2.5 1.5 L4 3 M0.5 7.5 H4.5" stroke="#555" stroke-width="0.5" fill="none"/><path d="M5 3 L8.5 1 V7 L5 9 Z" fill="#f0c040" stroke="#a07010" stroke-width="0.35"/><rect x="8.3" y="8.3" width="1.1" height="1.1" fill="#222"/></svg>
<svg style="position:absolute;left:160.8px;top:198.8px;" width="10" height="10" viewBox="0 0 10 10"><path d="M5 1 V5 L1.5 8 M5 5 L8.5 8" stroke="#e03030" stroke-width="0.6" fill="none" stroke-dasharray="1 0.6"/><circle cx="5" cy="5" r="0.8" fill="#3060d0"/><rect x="8.3" y="8.3" width="1.1" height="1.1" fill="#222"/></svg>
<svg style="position:absolute;left:148.8px;top:212px;" width="10" height="10" viewBox="0 0 10 10"><path d="M1 2 L3 0.5 L4 2.5 L2 4 Z" fill="#e0a030"/><path d="M3 4 L6 7" stroke="#e03030" stroke-width="0.8"/><rect x="5" y="5.5" width="4" height="3.5" fill="#f0c040" stroke="#a07010" stroke-width="0.35"/><rect x="8.3" y="8.3" width="1.1" height="1.1" fill="#222"/></svg>
<svg style="position:absolute;left:160.8px;top:212px;" width="10" height="10" viewBox="0 0 10 10"><path d="M0.8 2 L4 0.8 L9 2.5 V9 H0.8 Z" fill="#e8a030" stroke="#906010" stroke-width="0.4"/><path d="M2 4 Q4.5 2.5 7.5 4.5 V8 H2 Z" fill="#f4c870"/></svg>
<svg style="position:absolute;left:148.8px;top:223.6px;" width="10" height="10" viewBox="0 0 10 10"><ellipse cx="4.5" cy="4.5" rx="3.8" ry="2.8" fill="none" stroke="#3060d0" stroke-width="0.9"/><path d="M1 4.5 H8" stroke="#e03030" stroke-width="0.6"/><path d="M4.5 0.5 V8.5" stroke="#e03030" stroke-width="0.5" stroke-dasharray="0.8 0.6"/></svg>
<svg style="position:absolute;left:148.8px;top:240px;" width="10" height="10" viewBox="0 0 10 10"><path d="M1 8.5 L6.5 3" stroke="#20a040" stroke-width="1.3"/><path d="M1 2.5 L7.5 8.5" stroke="#3050b0" stroke-width="1.1"/><circle cx="7" cy="2.2" r="1.6" fill="none" stroke="#20a040" stroke-width="0.9"/><circle cx="2" cy="2" r="1.3" fill="#3050b0"/></svg>
<div style="position:absolute;left:174px;top:375.8px;width:626px;height:13.1px;background:linear-gradient(#fafafa 0,#fafafa 1px,#f0f0f0 1.5px)"></div>
<div style="position:absolute;left:144.6px;top:375.6px;width:30px;height:13.3px;background:#f0f0f0"></div>
<svg style="position:absolute;left:149.8px;top:377.4px;" width="8.2" height="9.4" viewBox="0 0 8.2 9.4"><rect x="0.3" y="0.3" width="7.6" height="8.8" fill="#d8d8d8" stroke="#c0c0c0" stroke-width="0.5"/><path d="M1.5 4.7 H6.5 M1.5 4.7 L3.3 3.2" stroke="#a8a8a8" stroke-width="0.8" fill="none"/></svg>
<svg style="position:absolute;left:158.6px;top:377.4px;" width="8.6" height="9.4" viewBox="0 0 8.6 9.4"><rect x="0.3" y="0.3" width="8" height="8.8" fill="#e8e8e8" stroke="#c4c4c4" stroke-width="0.5"/><path d="M2 2.2 L6.3 7 M6.3 2.2 L2 7" stroke="#e02020" stroke-width="1.1"/></svg>
<div style="position:absolute;left:169.8px;top:379.9px;font-size:5.06px;line-height:6.071999999999999px;color:#222;white-space:nowrap;">Select the region to be assigned a Remeshing Rule or select Done to select the whole model</div>
<div style="position:absolute;left:381.4px;top:379.9px;font-size:5.06px;line-height:6.071999999999999px;color:#222;white-space:nowrap;">(</div>
<svg style="position:absolute;left:385.6px;top:378.6px;" width="6.5" height="7" viewBox="0 0 6.5 7"><rect x="0.5" y="0.8" width="5" height="5" fill="#fff" stroke="#333" stroke-width="0.55"/><path d="M1.5 3.3 L2.8 4.6 L4.8 1.8" stroke="#222" stroke-width="0.6" fill="none"/></svg>
<div style="position:absolute;left:393.2px;top:379.9px;font-size:5.06px;line-height:6.071999999999999px;color:#222;white-space:nowrap;">Create set:</div>
<div style="position:absolute;left:418.8px;top:377.8px;width:33.6px;height:8.4px;background:#fff;border:0.6px solid #c8c8c8"></div>
<div style="position:absolute;left:420.2px;top:379.4px;width:12.8px;height:5.6px;background:#0a78d7"></div>
<div style="position:absolute;left:420.4px;top:379.9px;font-size:5.06px;line-height:6.071999999999999px;color:#fff;white-space:nowrap;">Set-5</div>
<div style="position:absolute;left:454.2px;top:379.9px;font-size:5.06px;line-height:6.071999999999999px;color:#222;white-space:nowrap;">)</div>
<div style="position:absolute;left:458px;top:377.6px;width:14.4px;height:9px;background:#e6e6e6;border:0.6px solid #3c8ee0"></div>
<div style="position:absolute;left:459.6px;top:379.9px;font-size:5.06px;line-height:6.071999999999999px;color:#222;white-space:nowrap;">Done</div>
<div style="position:absolute;left:729px;top:378px;width:16.4px;height:8.6px;background:#e6e6e6;border:0.6px solid #b8b8b8"></div>
<div style="position:absolute;left:730.6px;top:379.4px;font-size:4.8px;line-height:5.76px;color:#222;white-space:nowrap;">Sets...</div>
<svg style="position:absolute;left:754px;top:376px;" width="46" height="13" viewBox="0 0 46 13"><path d="M5.6 1.6 Q7.6 1.2 7.6 2.4 Q7.4 3.2 6.2 3.4 Q7.8 3.6 7.4 4.8 Q7 5.8 5 5.4" stroke="#2ab0a8" stroke-width="0.65" fill="none"/><path d="M2.2 6.6 L1 11.6 M2.2 6.6 Q5.4 6.4 4.6 9.2 Q3.8 11.6 1 11.6" stroke="#2ab0a8" stroke-width="0.8" fill="none"/><path d="M9.4 6.8 Q6.6 6.4 6.4 8 Q6.3 9 7.8 9.2 Q9.2 9.5 8.6 10.8 Q8 11.8 5 11.4" stroke="#2ab0a8" stroke-width="0.8" fill="none"/><text x="13" y="10.8" font-family="Liberation Sans" font-size="7" fill="#2ab0a8" stroke="#2ab0a8" stroke-width="0.12" textLength="32" lengthAdjust="spacingAndGlyphs" transform="skewX(-10)">SIMULIA</text></svg>
<div style="position:absolute;left:0px;top:389px;width:800px;height:43.5px;background:#f0f0f0"></div>
<div style="position:absolute;left:1px;top:391px;width:15.5px;height:41px;background:#f7f7f7;border-right:0.5px solid #e0e0e0"></div>
<svg style="position:absolute;left:4.2px;top:394.5px;" width="9" height="9" viewBox="0 0 9 9"><rect x="1.5" y="0.5" width="7" height="7" fill="#f0ecd8" stroke="#888" stroke-width="0.5"/><path d="M0.5 8.5 L4 5" stroke="#a07010" stroke-width="1"/><circle cx="1.2" cy="7.8" r="0.9" fill="#e0a020"/></svg>
<svg style="position:absolute;left:3.5px;top:408.2px;" width="10.5" height="10.5" viewBox="0 0 10.5 10.5"><rect x="0.5" y="0.5" width="9.5" height="9.5" fill="#f4dc70" stroke="#8a7a40" stroke-width="0.6"/><path d="M1.8 3.6 L3.2 5.2 L1.8 6.8 M4.3 3.6 L5.7 5.2 L4.3 6.8 M6.8 3.6 L8.2 5.2 L6.8 6.8" stroke="#111" stroke-width="0.75" fill="none"/></svg>
<div style="position:absolute;left:17.5px;top:391px;width:775.4px;height:40.3px;background:#fff;border:0.6px solid #c8c8c8"></div>
<div style="position:absolute;left:19.2px;top:394.3px;font-family:'Liberation Mono',monospace;font-size:5.53px;line-height:5.3px;color:#4a4a4a;white-space:pre">A new model database has been created.</div>
<div style="position:absolute;left:19.2px;top:399.65000000000003px;font-family:'Liberation Mono',monospace;font-size:5.53px;line-height:5.3px;color:#4a4a4a;white-space:pre">The model &quot;Model-1&quot; has been created.</div>
<div style="position:absolute;left:19.2px;top:405.0px;font-family:'Liberation Mono',monospace;font-size:5.53px;line-height:5.3px;color:#4a4a4a;white-space:pre">The model &quot;Model-1&quot; from model database &quot;C:/Users/admin/Desktop/Cyl_Lud_CAE/Cyl_Lud.cae&quot; has been imported as &quot;Model-1&quot;.</div>
<svg style="position:absolute;left:793px;top:424.5px;" width="7" height="7" viewBox="0 0 7 7"><rect x="5" y="1" width="0.8" height="0.8" fill="#b0b0b0"/><rect x="3" y="3" width="0.8" height="0.8" fill="#b0b0b0"/><rect x="5" y="3" width="0.8" height="0.8" fill="#b0b0b0"/><rect x="1" y="5" width="0.8" height="0.8" fill="#b0b0b0"/><rect x="3" y="5" width="0.8" height="0.8" fill="#b0b0b0"/><rect x="5" y="5" width="0.8" height="0.8" fill="#b0b0b0"/></svg>
<div style="position:absolute;left:626.6px;top:394.2px;font-size:8.3px;line-height:9.96px;color:#c6c6c6;white-space:nowrap;">Windows</div>
<svg style="position:absolute;left:665.5px;top:394.6px;" width="14.5" height="8.6" viewBox="0 0 14.5 8.6"><g transform="translate(0.00,0) scale(0.7200,0.8400)" fill="none" stroke="#c6c6c6" stroke-width="0.833"><path d="M1.05 0.84 H5.55 M3.30 0.84 L1.05 4.58 M3.30 2.38 L5.55 4.58"/><path d="M8.60 0.20 V6.00 M8.60 3.10 H6.80"/><ellipse cx="4.80" cy="8.20" rx="2.80" ry="1.60"/></g><g transform="translate(7.20,0) scale(0.7200,0.8400)" fill="none" stroke="#c6c6c6" stroke-width="0.833"><path d="M2.20 0.38 H7.80 M3.88 0.38 V3.62 M6.12 0.38 V3.62 M2.20 3.62 H7.80"/><path d="M0.60 5.20 H9.40 M5.00 5.20 V6.50"/><rect x="2.48" y="6.76" width="5.04" height="2.88"/></g></svg>
<svg style="position:absolute;left:685px;top:394.6px;" width="15" height="8.6" viewBox="0 0 15 8.6"><g transform="translate(0.00,0) scale(0.7400,0.8400)" fill="none" stroke="#c6c6c6" stroke-width="0.811"><ellipse cx="3.30" cy="2.60" rx="2.50" ry="2.20"/><path d="M8.60 0.20 V6.00"/><path d="M2.28 6.60 V9.64 H7.60"/></g><g transform="translate(7.40,0) scale(0.7400,0.8400)" fill="none" stroke="#c6c6c6" stroke-width="0.811"><path d="M2.48 0.56 H7.52 M5.00 0.56 L2.48 3.62 M5.00 1.82 L7.52 3.62"/><path d="M0.60 5.20 H9.40"/><ellipse cx="5.00" cy="8.20" rx="2.80" ry="1.60"/></g></svg>
<div style="position:absolute;left:626.6px;top:404.6px;font-size:5.3px;line-height:6.359999999999999px;color:#cbcbcb;white-space:nowrap;">[</div>
<svg style="position:absolute;left:628.8px;top:405.5px;" width="12.5" height="6" viewBox="0 0 12.5 6"><g transform="translate(0.00,0) scale(0.6000,0.5800)" fill="none" stroke="#cbcbcb" stroke-width="0.833"><path d="M3.30 0.62 L1.05 4.58 M3.30 2.16 L5.55 4.58"/><path d="M8.60 0.20 V6.00 M8.60 3.10 H6.80"/><path d="M2.00 6.76 H7.60 V8.20 H2.00 V9.64 H7.60"/></g><g transform="translate(6.00,0) scale(0.6000,0.5800)" fill="none" stroke="#cbcbcb" stroke-width="0.833"><path d="M1.05 0.84 H5.55 M3.30 0.84 L1.05 4.58 M3.30 2.38 L5.55 4.58"/><path d="M8.60 0.20 V6.00 M8.60 3.10 H6.80"/><ellipse cx="4.80" cy="8.20" rx="2.80" ry="1.60"/></g></svg>
<div style="position:absolute;left:641.3px;top:404.6px;font-size:5.3px;line-height:6.359999999999999px;color:#cbcbcb;white-space:nowrap;">]</div>
<svg style="position:absolute;left:643.6px;top:405.5px;" width="12.5" height="6" viewBox="0 0 12.5 6"><g transform="translate(0.00,0) scale(0.6000,0.5800)" fill="none" stroke="#cbcbcb" stroke-width="0.833"><ellipse cx="5.00" cy="3.00" rx="2.50" ry="2.50"/><path d="M0.60 7.60 H9.40"/></g><g transform="translate(6.00,0) scale(0.6000,0.5800)" fill="none" stroke="#cbcbcb" stroke-width="0.833"><path d="M2.50 0.75 H7.50 V3.00 H2.50 V5.25 H7.50"/><path d="M0.60 7.60 H9.40 M5.00 7.60 V6.40"/></g></svg>
<svg style="position:absolute;left:658px;top:405.5px;" width="24.5" height="6" viewBox="0 0 24.5 6"><g transform="translate(0.00,0) scale(0.6000,0.5800)" fill="none" stroke="#cbcbcb" stroke-width="0.833"><ellipse cx="3.40" cy="5.00" rx="2.60" ry="3.50"/><path d="M8.60 0.30 V9.70"/></g><g transform="translate(6.00,0) scale(0.6000,0.5800)" fill="none" stroke="#cbcbcb" stroke-width="0.833"><path d="M7.80 0.38 H2.48 V3.62 H7.80"/><path d="M0.60 5.20 H9.40 M5.00 5.20 V4.00"/><ellipse cx="5.00" cy="8.20" rx="2.80" ry="1.60"/></g><g transform="translate(12.00,0) scale(0.6000,0.5800)" fill="none" stroke="#cbcbcb" stroke-width="0.833"><path d="M2.62 1.64 H4.18 M1.06 3.25 H5.74"/><ellipse cx="3.40" cy="6.05" rx="1.98" ry="2.10"/><path d="M7.40 0.30 V9.70 M7.40 5.00 H9.20"/></g><g transform="translate(18.00,0) scale(0.6000,0.5800)" fill="none" stroke="#cbcbcb" stroke-width="0.833"><ellipse cx="3.40" cy="5.00" rx="2.60" ry="3.50"/><path d="M8.60 0.30 V9.70 M8.60 4.00 H6.80 M8.60 6.00 H6.80"/></g></svg>
<div style="position:absolute;left:683.8px;top:404.9px;font-size:6.7px;line-height:8.04px;color:#cbcbcb;white-space:nowrap;">Windows</div>
<svg style="position:absolute;left:711.8px;top:405.5px;" width="6.5" height="6" viewBox="0 0 6.5 6"><g transform="translate(0.00,0) scale(0.6000,0.5800)" fill="none" stroke="#cbcbcb" stroke-width="0.833"><path d="M2.20 0.38 H7.80 V2.00 H2.20 V3.62 H7.80"/><path d="M0.60 5.20 H9.40"/><path d="M2.20 6.76 H7.80 V8.20 H2.20 V9.64 H7.80"/></g></svg>
<svg style="position:absolute;left:720px;top:405.5px;" width="12.5" height="6" viewBox="0 0 12.5 6"><g transform="translate(0.00,0) scale(0.6000,0.5800)" fill="none" stroke="#cbcbcb" stroke-width="0.833"><path d="M1.05 0.84 H5.55 M3.30 0.84 L1.05 4.58 M3.30 2.38 L5.55 4.58"/><path d="M8.60 0.20 V6.00 M8.60 3.10 H6.80"/><ellipse cx="4.80" cy="8.20" rx="2.80" ry="1.60"/></g><g transform="translate(6.00,0) scale(0.6000,0.5800)" fill="none" stroke="#cbcbcb" stroke-width="0.833"><path d="M2.20 0.38 H7.80 M3.88 0.38 V3.62 M6.12 0.38 V3.62 M2.20 3.62 H7.80"/><path d="M0.60 5.20 H9.40 M5.00 5.20 V6.50"/><rect x="2.48" y="6.76" width="5.04" height="2.88"/></g></svg>
<svg style="position:absolute;left:734.8px;top:405.5px;" width="30" height="6" viewBox="0 0 30 6"><g transform="translate(0.00,0) scale(0.5800,0.5800)" fill="none" stroke="#cbcbcb" stroke-width="0.862"><ellipse cx="3.30" cy="2.60" rx="2.50" ry="2.20"/><path d="M8.60 0.20 V6.00"/><path d="M2.28 6.60 V9.64 H7.60"/></g><g transform="translate(5.80,0) scale(0.5800,0.5800)" fill="none" stroke="#cbcbcb" stroke-width="0.862"><path d="M2.48 0.56 H7.52 M5.00 0.56 L2.48 3.62 M5.00 1.82 L7.52 3.62"/><path d="M0.60 5.20 H9.40"/><ellipse cx="5.00" cy="8.20" rx="2.80" ry="1.60"/></g><g transform="translate(11.60,0) scale(0.5800,0.5800)" fill="none" stroke="#cbcbcb" stroke-width="0.862"><path d="M2.55 0.49 H4.05 M1.05 1.50 H5.55"/><ellipse cx="3.30" cy="3.26" rx="1.90" ry="1.32"/><path d="M7.40 0.20 V6.00 M7.40 3.10 H9.20"/><path d="M2.28 6.60 V9.64 H7.32 V6.60 M2.28 8.04 H7.32"/></g><g transform="translate(17.40,0) scale(0.5800,0.5800)" fill="none" stroke="#cbcbcb" stroke-width="0.862"><path d="M1.06 1.50 V8.15 H6.00"/><path d="M8.60 0.30 V9.70"/></g><g transform="translate(23.20,0) scale(0.5800,0.5800)" fill="none" stroke="#cbcbcb" stroke-width="0.862"><path d="M6.00 1.85 H1.06 V8.15 H6.00"/><path d="M7.40 0.30 V9.70 M7.40 5.00 H9.20"/></g></svg>
<div style="position:absolute;left:763.2px;top:404.6px;font-size:5.3px;line-height:6.359999999999999px;color:#cbcbcb;white-space:nowrap;">.</div>
<div style="position:absolute;left:0px;top:432.5px;width:800px;height:17.5px;background:#101217"></div>
<svg style="position:absolute;left:6px;top:437.5px;" width="8" height="8" viewBox="0 0 8 8"><path d="M0.5 1 L3.4 0.6 V3.6 H0.5 Z M3.9 0.5 L7.5 0 V3.6 H3.9 Z M0.5 4.1 H3.4 V7.1 L0.5 6.7 Z M3.9 4.1 H7.5 V7.7 L3.9 7.2 Z" fill="#fff"/></svg>
<svg style="position:absolute;left:25.5px;top:437px;" width="9" height="9" viewBox="0 0 9 9"><circle cx="5.4" cy="3.4" r="2.3" fill="none" stroke="#e0e0e0" stroke-width="0.6"/><path d="M3.7 5.1 L1.2 7.8" stroke="#e0e0e0" stroke-width="0.7"/></svg>
<svg style="position:absolute;left:45.5px;top:437.5px;" width="9" height="8" viewBox="0 0 9 8"><rect x="1.6" y="1.8" width="5" height="4.2" fill="none" stroke="#d8d8d8" stroke-width="0.6"/><path d="M1 0.8 V7 M7.2 0.8 V7" stroke="#d8d8d8" stroke-width="0.5"/><circle cx="8" cy="2.6" r="0.5" fill="#e8e8e8"/></svg>
<svg style="position:absolute;left:65.5px;top:436px;" width="11" height="11" viewBox="0 0 11 11"><circle cx="5.5" cy="5.5" r="5" fill="#db4437"/><path d="M5.5 5.5 L1.2 3 A5 5 0 0 0 5.5 10.5 Z" fill="#0f9d58"/><path d="M5.5 5.5 L9.8 3 A5 5 0 0 1 5.5 10.5 Z" fill="#ffcd40"/><path d="M5.5 5.5 L1.2 3 A5 5 0 0 1 9.8 3 Z" fill="#db4437"/><circle cx="5.5" cy="5.5" r="2.4" fill="#fff"/><circle cx="5.5" cy="5.5" r="1.8" fill="#4285f4"/></svg>
<div style="position:absolute;left:63.5px;top:448.8px;width:16.5px;height:1.2px;background:#6aaee0"></div>
<svg style="position:absolute;left:86.5px;top:436px;" width="11" height="10" viewBox="0 0 11 10"><path d="M0.5 1 H4 L5 2.2 H10.5 V9.5 H0.5 Z" fill="#e8b830"/><path d="M0.5 3.5 H10.5 V9.5 H0.5 Z" fill="#f8d870"/><rect x="3.5" y="5.5" width="4" height="4" fill="#3aa0e0"/></svg>
<svg style="position:absolute;left:106.8px;top:436.4px;" width="10.5" height="9.5" viewBox="0 0 10.5 9.5"><rect x="0.3" y="0.3" width="9.9" height="8.9" fill="#f4f8fc" stroke="#3a90d8" stroke-width="0.5"/><rect x="1" y="1" width="8.5" height="7.5" fill="#9ad0f4"/><path d="M1 8.5 L4 5 L6 7 L7.5 5.8 L9.5 8.5 Z" fill="#2a7ac8"/><circle cx="7" cy="3" r="1" fill="#fff"/></svg>
<div style="position:absolute;left:104.3px;top:448.8px;width:16.5px;height:1.2px;background:#6aaee0"></div>
<svg style="position:absolute;left:126.8px;top:436.2px;" width="10.5" height="10" viewBox="0 0 10.5 10"><rect x="0.2" y="0.2" width="10" height="9.6" fill="#f8e000"/><ellipse cx="5.2" cy="4.8" rx="4" ry="3" fill="#3a1e1e"/><text x="2.3" y="6" font-family="Liberation Sans" font-size="3" fill="#f8e000">TALK</text></svg>
<div style="position:absolute;left:124.5px;top:448.8px;width:16.5px;height:1.2px;background:#6aaee0"></div>
<svg style="position:absolute;left:147.8px;top:436.2px;" width="10.5" height="10" viewBox="0 0 10.5 10"><rect x="3" y="0.5" width="7" height="9" fill="#f0f0f0"/><rect x="0.3" y="1.2" width="7" height="7.6" fill="#d04420"/><rect x="7" y="2" width="3" height="6" fill="#e87850"/><text x="1.5" y="7" font-family="Liberation Sans" font-size="5" font-weight="bold" fill="#fff">P</text></svg>
<div style="position:absolute;left:145.2px;top:448.8px;width:16.5px;height:1.2px;background:#6aaee0"></div>
<svg style="position:absolute;left:167.8px;top:436px;" width="11" height="10.5" viewBox="0 0 11 10.5"><ellipse cx="5" cy="6" rx="4.5" ry="3.5" fill="none" stroke="#60b0e0" stroke-width="0.9"/><path d="M1 9 L9 2" stroke="#e0a040" stroke-width="1"/><circle cx="9" cy="1.5" r="1.2" fill="#e08020"/><path d="M2.5 5 L5 8" stroke="#40a0e0" stroke-width="0.8"/></svg>
<div style="position:absolute;left:166px;top:448.8px;width:16.5px;height:1.2px;background:#6aaee0"></div>
<svg style="position:absolute;left:188.8px;top:436.2px;" width="10.5" height="10" viewBox="0 0 10.5 10"><rect x="0.3" y="0.5" width="9.9" height="9" fill="#0c0c0c" stroke="#888" stroke-width="0.4"/><rect x="0.3" y="0.5" width="9.9" height="1.4" fill="#c8c8c8"/><path d="M1.5 3.5 L3 4.5 L1.5 5.5" stroke="#ddd" stroke-width="0.4" fill="none"/></svg>
<div style="position:absolute;left:186.5px;top:448.8px;width:16.5px;height:1.2px;background:#6aaee0"></div>
<div style="position:absolute;left:204px;top:432.5px;width:20.5px;height:17.5px;background:#2d2e35"></div>
<svg style="position:absolute;left:208.8px;top:436px;" width="11" height="10" viewBox="0 0 11 10"><path d="M5.5 0.3 L9.5 3.8 H1.5 Z" fill="#8a80d8"/><rect x="0.5" y="4.3" width="10" height="1.3" fill="#f0f0f8"/><path d="M5.5 9.7 L9.5 6.2 H1.5 Z" fill="#8a80d8"/></svg>
<div style="position:absolute;left:204px;top:448.8px;width:20.5px;height:1.2px;background:#8ac4f0"></div>
<svg style="position:absolute;left:680.5px;top:436.5px;" width="10" height="9" viewBox="0 0 10 9"><circle cx="6" cy="2.3" r="1.4" fill="none" stroke="#d8d8d8" stroke-width="0.5"/><path d="M3.8 8 Q4.2 4.8 6 4.8 Q7.8 4.8 8.2 8 M0.8 5.2 L2.8 4.4 M1.4 8.4 L3.2 6.2" stroke="#d8d8d8" stroke-width="0.5" fill="none"/></svg>
<svg style="position:absolute;left:697.5px;top:439px;" width="7" height="5" viewBox="0 0 7 5"><path d="M0.9 3.8 L3.5 1.3 L6.1 3.8" stroke="#e0e0e0" stroke-width="0.55" fill="none"/></svg>
<svg style="position:absolute;left:707.5px;top:436.5px;" width="7" height="9" viewBox="0 0 7 9"><path d="M1.6 7.8 L5.8 2.2" stroke="#e8e8e8" stroke-width="1.9" stroke-linecap="round"/><path d="M4.3 4.2 L5.8 2.2" stroke="#8ad030" stroke-width="1.9" stroke-linecap="round"/></svg>
<svg style="position:absolute;left:716.5px;top:436.5px;" width="9" height="9" viewBox="0 0 9 9"><rect x="1.8" y="1.2" width="6" height="4.6" fill="none" stroke="#e0e0e0" stroke-width="0.55"/><path d="M0.6 1.2 V6.8 M4.8 5.8 V7.8 M2.8 8 H6.8" stroke="#e0e0e0" stroke-width="0.5"/></svg>
<svg style="position:absolute;left:726.5px;top:437px;" width="8" height="8" viewBox="0 0 8 8"><path d="M0.6 3 H1.8 L3.6 1.2 V6.8 L1.8 5 H0.6 Z" fill="none" stroke="#e0e0e0" stroke-width="0.5"/><path d="M5 2.6 Q5.9 4 5 5.4 M6.3 1.6 Q7.6 4 6.3 6.4" stroke="#e0e0e0" stroke-width="0.5" fill="none"/></svg>
<svg style="position:absolute;left:738px;top:437.5px;" width="7" height="7" viewBox="0 0 7 7"><circle cx="3.5" cy="3.5" r="2.6" fill="none" stroke="#c0c0c0" stroke-width="0.55"/><path d="M2.1 3.5 H4.9" stroke="#c0c0c0" stroke-width="0.55"/></svg>
<svg style="position:absolute;left:750.4px;top:435px;" width="11" height="5.6" viewBox="0 0 11 5.6"><g transform="translate(0.00,0) scale(0.5300,0.5400)" fill="none" stroke="#e8e8e8" stroke-width="1.038"><ellipse cx="5.00" cy="3.00" rx="2.50" ry="2.50"/><path d="M0.60 7.60 H9.40 M5.00 7.60 V6.40"/></g><g transform="translate(5.30,0) scale(0.5300,0.5400)" fill="none" stroke="#e8e8e8" stroke-width="1.038"><path d="M1.05 0.84 H5.55 M3.30 0.84 L1.05 4.58 M3.30 2.38 L5.55 4.58"/><path d="M8.60 0.20 V6.00 M8.60 3.10 H6.80"/><path d="M2.28 6.60 V9.64 H7.60"/></g></svg>
<div style="position:absolute;left:762.8px;top:434.4px;font-size:5.2px;line-height:6.24px;color:#e8e8e8;white-space:nowrap;">1:14</div>
<div style="position:absolute;left:747.5px;top:442.2px;font-size:5.2px;line-height:6.24px;color:#e8e8e8;white-space:nowrap;">2018-11-15</div>
<svg style="position:absolute;left:782.5px;top:436.5px;" width="11" height="11" viewBox="0 0 11 11"><rect x="0.5" y="0.5" width="7.5" height="6" fill="none" stroke="#e8e8e8" stroke-width="0.7"/><path d="M2 2.5 H6.5 M2 4.3 H6.5" stroke="#e8e8e8" stroke-width="0.5"/><circle cx="7.5" cy="7.6" r="2.6" fill="#101217" stroke="#e8e8e8" stroke-width="0.5"/><text x="6.6" y="9.3" font-family="Liberation Sans" font-size="3.6" fill="#fff">1</text></svg>
</body></html>
